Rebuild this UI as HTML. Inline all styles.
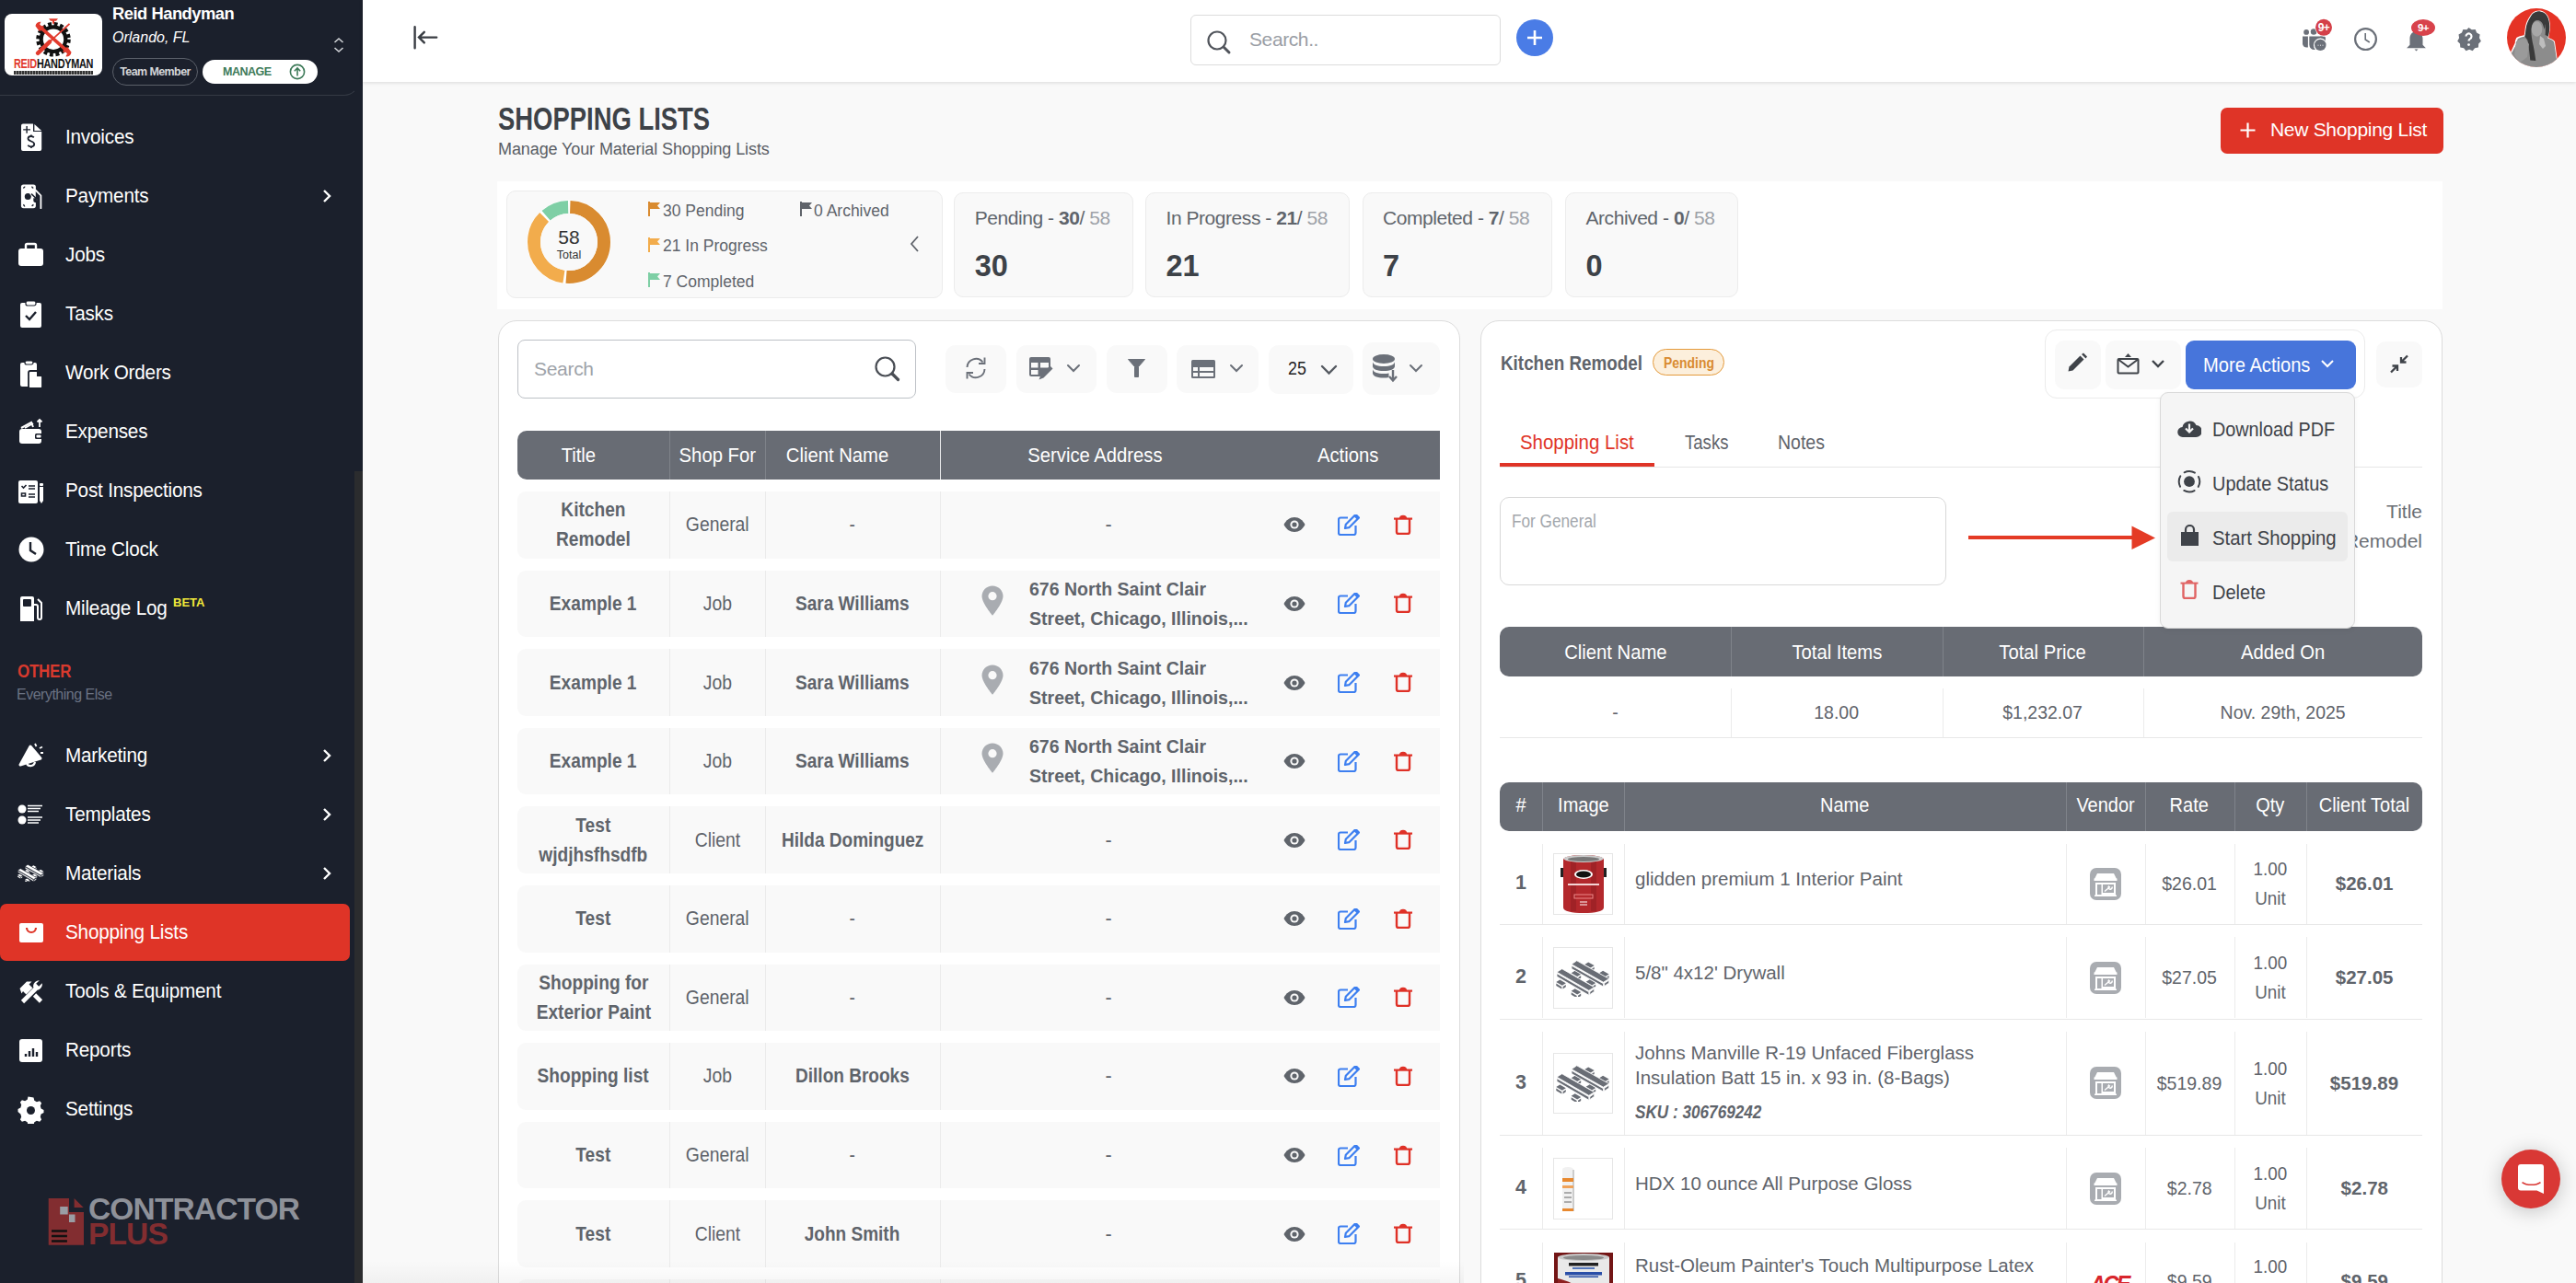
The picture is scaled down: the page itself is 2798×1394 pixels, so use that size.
<!DOCTYPE html>
<html><head><meta charset="utf-8">
<style>
*{box-sizing:border-box;margin:0;padding:0}
html,body{width:2798px;height:1394px;overflow:hidden;background:#f9f9f9;font-family:"Liberation Sans",sans-serif;color:#5f646b}
.a{position:absolute}
svg{display:block}
#sb{position:absolute;left:0;top:0;width:394px;height:1394px;background:#1b202c;color:#fff;overflow:hidden}
.mi{position:absolute;left:0;width:380px;height:62px}
.mi .ic{position:absolute;left:17px;top:15px;width:32px;height:32px}
.mi .tx{position:absolute;left:71px;top:18px;font-size:22px;line-height:26px;letter-spacing:-0.2px;color:#fff;white-space:nowrap;transform:scaleX(0.94);transform-origin:0 0}
.mi .chev{position:absolute;left:347px;top:23px;width:16px;height:16px}
#top{position:absolute;left:394px;top:0;width:2404px;height:89px;background:#fff;box-shadow:0 1px 4px rgba(0,0,0,0.13)}
</style></head>
<body>
<div id="sb">
<div class="a" style="left:-20px;top:-20px;width:410px;height:124px;border:1.5px solid transparent;border-bottom-color:#353a45;border-radius:0 0 16px 0"></div>
<div class="mi" style="top:117.6px"><svg class="ic" viewBox="0 0 32 32"><path d="M8 1.4H19V10.1H28.2V29a2 2 0 0 1-2 2H8a2 2 0 0 1-2-2V3.4a2 2 0 0 1 2-2z" fill="#fff"/><path d="M20.4 1.9L28.2 8.9H20.4Z" fill="#fff"/><path d="M8.2 7.9H16M12.1 4V11.8" stroke="#1b202c" stroke-width="1.4"/><path d="M19.8 16.4c-.8-.9-1.9-1.4-3-1.4-1.8 0-3.3 1-3.3 2.6 0 3.6 6.7 2.2 6.7 5.9 0 1.7-1.5 2.9-3.5 2.9-1.3 0-2.6-.6-3.4-1.6M16.9 13.6v1.5M16.9 26.4V28" stroke="#1b202c" stroke-width="1.8" fill="none"/></svg><div class="tx">Invoices</div></div>
<div class="mi" style="top:181.6px"><svg class="ic" viewBox="0 0 32 32"><rect x="5.9" y="3.4" width="16" height="25.8" rx="2.6" fill="#fff"/><path d="M8 7.2a2 2 0 0 0 2-1.6M17.6 5.6a2.5 2.5 0 0 0 1.7 1.8M8.2 25.5a2 2 0 0 1 1.5 1.9M17.8 27.2a2.2 2.2 0 0 1 1.7-1.7" stroke="#1b202c" stroke-width="1.3" fill="none"/><circle cx="13.3" cy="16.5" r="3.5" fill="#1b202c"/><path d="M15.7 13.6L23 20.4" stroke="#fff" stroke-width="1.2"/><path d="M17 13.6L23 19.2" stroke="#1b202c" stroke-width="1.5"/><path d="M19.3 18.3H22V23h-.7a2 2 0 0 1-2-2z" fill="#1b202c"/><path d="M22 11.5L22 23" stroke="#1b202c" stroke-width="0.1"/><rect x="21.9" y="11" width="1" height="13" fill="#1b202c"/><path d="M21.9 9.8L27.4 15.5V29.2" stroke="#fff" stroke-width="1.8" fill="none" stroke-linecap="round"/></svg><div class="tx">Payments</div><svg class="chev" viewBox="0 0 16 16"><path d="M5 2l6 6-6 6" stroke="#fff" stroke-width="2.4" fill="none"/></svg></div>
<div class="mi" style="top:245.6px"><svg class="ic" viewBox="0 0 32 32"><rect x="3" y="9" width="27" height="19" rx="3" fill="#fff"/><path d="M11 9V5.5A1.5 1.5 0 0 1 12.5 4h8A1.5 1.5 0 0 1 22 5.5V9" stroke="#fff" stroke-width="2.4" fill="none"/></svg><div class="tx">Jobs</div></div>
<div class="mi" style="top:309.6px"><svg class="ic" viewBox="0 0 32 32"><rect x="5" y="4" width="23" height="27" rx="2" fill="#fff"/><rect x="11" y="2" width="11" height="5" rx="2" fill="#fff" stroke="#1b202c" stroke-width="1.2"/><path d="M11 18l4 4 7-8" stroke="#1b202c" stroke-width="2.4" fill="none"/></svg><div class="tx">Tasks</div></div>
<div class="mi" style="top:373.6px"><svg class="ic" viewBox="0 0 32 32"><path d="M5 7a2 2 0 0 1 2-2h14a2 2 0 0 1 2 2v22a2 2 0 0 1-2 2H7a2 2 0 0 1-2-2z" fill="#fff"/><rect x="10" y="3" width="9" height="4" rx="2" fill="#fff" stroke="#1b202c" stroke-width="1.2"/><path d="M14 16a2 2 0 0 1 2-2h7l6 6v11a2 2 0 0 1-2 2H16a2 2 0 0 1-2-2z" fill="#fff" stroke="#1b202c" stroke-width="1.8"/><path d="M23 14v6h6" fill="#1b202c"/></svg><div class="tx">Work Orders</div></div>
<div class="mi" style="top:437.6px"><svg class="ic" viewBox="0 0 32 32"><rect x="4" y="13" width="24" height="16" rx="3" fill="#fff"/><path d="M6 12l11-6 2 5" stroke="#fff" stroke-width="2" fill="none"/><path d="M10 12l9-5" stroke="#fff" stroke-width="2"/><rect x="21" y="18" width="8" height="6" rx="1.5" fill="#1b202c"/><rect x="22.5" y="19.5" width="5" height="3" rx="1" fill="#fff"/><path d="M26 11V3M23.5 5.5L26 3l2.5 2.5" stroke="#fff" stroke-width="1.8" fill="none"/></svg><div class="tx">Expenses</div></div>
<div class="mi" style="top:501.6px"><svg class="ic" viewBox="0 0 32 32"><rect x="3" y="5" width="21" height="25" rx="2" fill="#fff"/><path d="M6.5 11l2 2 3-3M14 11h7M14 14h7M6.5 19h4v3h-4zM14 20h7M14 23h7" stroke="#1b202c" stroke-width="1.6" fill="none"/><path d="M26 12h4v15l-2 3-2-3z" fill="#fff"/><rect x="26" y="8" width="4" height="3" rx="1" fill="#fff"/></svg><div class="tx">Post Inspections</div></div>
<div class="mi" style="top:565.6px"><svg class="ic" viewBox="0 0 32 32"><circle cx="17" cy="16" r="13.5" fill="#fff"/><path d="M16 8v9l6 4" stroke="#1b202c" stroke-width="2.4" fill="none"/></svg><div class="tx">Time Clock</div></div>
<div class="mi" style="top:629.6px"><svg class="ic" viewBox="0 0 32 32"><path d="M5 5a2 2 0 0 1 2-2h11a2 2 0 0 1 2 2v25H5z" fill="#fff"/><rect x="8" y="6" width="9" height="8" rx="1" fill="#1b202c"/><path d="M20 12h2a2 2 0 0 1 2 2v12a2 2 0 0 0 4 0V10l-4-4" stroke="#fff" stroke-width="2" fill="none"/></svg><div class="tx">Mileage Log</div><span class="a" style="left:188px;top:17px;font-size:13px;font-weight:700;color:#f2e93a;letter-spacing:0">BETA</span></div>
<div class="a" style="left:18.5px;top:717.5px;font-size:20px;font-weight:700;color:#d93a2e;letter-spacing:-0.3px;transform:scaleX(0.85);transform-origin:0 0">OTHER</div>
<div class="a" style="left:18px;top:746px;font-size:16px;color:#6a7283;letter-spacing:-0.5px">Everything Else</div>
<div class="mi" style="top:789.5px"><svg class="ic" viewBox="0 0 32 32"><path d="M5 26L16 6l11 13z" fill="#fff" stroke="#fff" stroke-width="3" stroke-linejoin="round"/><path d="M12 25a5 5 0 0 0 9-2" stroke="#fff" stroke-width="2.2" fill="none"/><path d="M21 3l1.5 3M26 8l3-1.5M27 13h3" stroke="#fff" stroke-width="1.8"/></svg><div class="tx">Marketing</div><svg class="chev" viewBox="0 0 16 16"><path d="M5 2l6 6-6 6" stroke="#fff" stroke-width="2.4" fill="none"/></svg></div>
<div class="mi" style="top:853.5px"><svg class="ic" viewBox="0 0 32 32"><circle cx="7" cy="10" r="4.5" fill="#fff"/><circle cx="7" cy="22" r="4.5" fill="#fff"/><path d="M13 6.5h16M13 9.5h14M13 12.5h12M13 19h16M13 22h14M13 25h12" stroke="#fff" stroke-width="1.7"/></svg><div class="tx">Templates</div><svg class="chev" viewBox="0 0 16 16"><path d="M5 2l6 6-6 6" stroke="#fff" stroke-width="2.4" fill="none"/></svg></div>
<div class="mi" style="top:917.5px"><svg class="ic" style="left:19px;top:21px;width:29.5px;height:19.7px" viewBox="0 0 60 40"><g fill="#fff"><path d="M31.200000000000003 4.9L35.2 2.4000000000000004L41.7 6.1000000000000005L37.7 8.600000000000001Z"/><path d="M31.200000000000003 6.4L37.2 10.0V12.4L31.200000000000003 8.8Z"/><path d="M38.5 9.9L41.7 7.7V10.0L38.5 12.3Z"/><path d="M47.1 14.3L51.1 11.8L57.6 15.5L53.6 18.0Z"/><path d="M47.1 15.8L53.1 19.4V21.8L47.1 18.2Z"/><path d="M54.4 19.3L57.6 17.1V19.4L54.4 21.700000000000003Z"/><path d="M16.7 14.3L20.7 11.8L27.2 15.5L23.2 18.0Z"/><path d="M16.7 15.8L22.7 19.4V21.8L16.7 18.2Z"/><path d="M24.0 19.3L27.2 17.1V19.4L24.0 21.700000000000003Z"/><path d="M32.7 23.7L36.7 21.2L43.2 24.9L39.2 27.4Z"/><path d="M32.7 25.2L38.7 28.799999999999997V31.2L32.7 27.599999999999998Z"/><path d="M40.0 28.7L43.2 26.5V28.799999999999997L40.0 31.1Z"/><path d="M0.2999999999999998 24.1L4.3 21.6L10.8 25.3L6.8 27.8Z"/><path d="M0.2999999999999998 25.6L6.3 29.200000000000003V31.6L0.2999999999999998 28.0Z"/><path d="M7.6 29.1L10.8 26.900000000000002V29.200000000000003L7.6 31.5Z"/><path d="M16.7 33.8L20.7 31.299999999999997L27.2 35.0L23.2 37.5Z"/><path d="M16.7 35.3L22.7 38.9V41.3L16.7 37.699999999999996Z"/><path d="M24.0 38.8L27.2 36.599999999999994V38.9L24.0 41.199999999999996Z"/></g><g fill="#fff" stroke="#1b202c" stroke-width="0.8"><path d="M17 4.7L22.7 0.8L57.7 20.5L51.5 24.2Z"/><path d="M17 6.2L51.5 25.7V29L17 9.5Z"/><path d="M52.5 25.5L57.7 22V25L52.5 28.5Z"/><path d="M1 13.2L6.6 9.7L41.7 29.7L35.8 33.3Z"/><path d="M1 14.7L35.8 34.8V38.3L1 18Z"/><path d="M36.8 34.7L41.7 31.2V34.2L36.8 37.7Z"/></g></svg><div class="tx">Materials</div><svg class="chev" viewBox="0 0 16 16"><path d="M5 2l6 6-6 6" stroke="#fff" stroke-width="2.4" fill="none"/></svg></div>
<div class="a" style="left:0;top:982px;width:380px;height:62px;background:#df3427;border-radius:7px"></div>
<div class="mi" style="top:981.5px"><svg class="ic" viewBox="0 0 32 32"><rect x="4" y="6" width="26" height="21" rx="2" fill="#fff"/><path d="M12 11a5 5 0 0 0 10 0" stroke="#df3427" stroke-width="2.2" fill="none"/></svg><div class="tx">Shopping Lists</div></div>
<div class="mi" style="top:1045.5px"><svg class="ic" viewBox="0 0 32 32"><path d="M7.5 27.5L22 13" stroke="#fff" stroke-width="4.6"/><path d="M19 10.5a6.5 6.5 0 0 1 6.8-6.3l-3.6 3.6 3 3 3.6-3.6a6.5 6.5 0 0 1-8.3 7.3z" fill="#fff"/><path d="M20.5 20L27.5 27" stroke="#fff" stroke-width="4.6"/><path d="M4.5 13L12 5.5L17.5 5.5L14.5 8.5L18.5 12.5L11.5 19.5L8 16L6.5 18.5Z" fill="#fff"/></svg><div class="tx">Tools &amp; Equipment</div></div>
<div class="mi" style="top:1109.5px"><svg class="ic" viewBox="0 0 32 32"><rect x="4" y="4" width="25" height="25" rx="3" fill="#fff"/><path d="M11 23v-3M15 23v-6M19 23v-9M23 23v-5" stroke="#1b202c" stroke-width="2.4"/></svg><div class="tx">Reports</div></div>
<div class="mi" style="top:1173.5px"><svg class="ic" viewBox="0 0 32 32"><path d="M16.5 3l3 .5.8 3.2 2.6 1.5 3.2-1 2 2.4-1.3 3 .8 2.9 2.9 1.5v3l-2.9 1.5-.8 2.9 1.3 3-2 2.4-3.2-1-2.6 1.5-.8 3.2-3 .5-3-.5-.8-3.2-2.6-1.5-3.2 1-2-2.4 1.3-3-.8-2.9L2.5 19v-3l2.9-1.5.8-2.9-1.3-3 2-2.4 3.2 1 2.6-1.5.8-3.2z" fill="#fff"/><circle cx="16.5" cy="17.5" r="4.5" fill="#1b202c"/></svg><div class="tx">Settings</div></div>
<svg class="a" style="left:52px;top:1300px" width="42" height="56" viewBox="52 1300 42 56">
<path d="M52.7 1302H75V1317H91V1352.7H52.7z" fill="#822d30"/>
<path d="M80.6 1302L90.7 1312H80.6z" fill="#822d30"/>
<rect x="65.2" y="1311" width="8.5" height="8.5" fill="#9a9da4"/><rect x="75" y="1319.5" width="6.5" height="8.5" fill="#9a9da4"/>
<path d="M56 1337.5H72.9M56 1343H72.9M56 1348.5H72.9" stroke="#111" stroke-width="2.6"/>
</svg>
<div class="a" style="left:96px;top:1296px;font-size:33.5px;font-weight:700;color:#8e9199;letter-spacing:-0.85px;line-height:36px;white-space:nowrap">CONTRACTOR</div>
<div class="a" style="left:96px;top:1323px;font-size:33.5px;font-weight:700;color:#822d30;letter-spacing:-0.85px;line-height:36px;white-space:nowrap">PLUS</div>
<div class="a" style="left:5px;top:14.7px;width:106.3px;height:67.3px;background:#fff;border-radius:8px;overflow:hidden">
<svg class="a" style="left:0;top:0" width="106" height="67" viewBox="5 14.7 106 67">
<g transform="translate(58,42.4)">
<circle r="15.5" fill="none" stroke="#111" stroke-width="6.5" stroke-dasharray="3.6 2.5"/>
<circle r="13.3" fill="none" stroke="#111" stroke-width="4.2"/>
</g>
<path d="M42 27.5L74.5 56.5" stroke="#e23b2e" stroke-width="3.6"/>
<path d="M38.5 28a5 5 0 0 1 6-4.5l-1.5 3 1.5 2 3-1a5 5 0 0 1-5 6z" fill="#e23b2e"/>
<path d="M77.5 56.5a5 5 0 0 1-6 4.5l1.5-3-1.5-2-3 1a5 5 0 0 1 5-6z" fill="#e23b2e"/>
<path d="M75.5 25.5L54 45" stroke="#e23b2e" stroke-width="1.8"/>
<path d="M54 45L41 57.5" stroke="#e23b2e" stroke-width="4.5" stroke-linecap="round"/>
<path d="M53 20h10l-2 2.5h-2v3h-2v-3h-2z" fill="#e23b2e"/>
</svg>
<div class="a" style="left:9.7px;top:47.5px;font-size:16px;font-weight:700;letter-spacing:-0.4px;line-height:16px;transform:scale(0.68,0.95);transform-origin:0 0;white-space:nowrap;font-family:'Liberation Sans'"><span style="color:#e23b2e">REID</span><span style="color:#111">HANDYMAN</span></div>
<div class="a" style="left:9.7px;top:62.3px;width:86.3px;height:3.8px;background:repeating-linear-gradient(90deg,#333 0 2px,#888 2px 3px)"></div>
</div>
<div class="a" style="left:122px;top:3.5px;font-size:19px;font-weight:700;color:#fff;letter-spacing:-0.5px;transform:scaleX(0.965);transform-origin:0 0">Reid Handyman</div>
<div class="a" style="left:122px;top:32px;font-size:16px;font-style:italic;color:#fff;letter-spacing:0px">Orlando, FL</div>
<div class="a" style="left:122px;top:63px;width:93px;height:30px;border:1.2px solid #5b606a;border-radius:15px;font-size:12.5px;font-weight:700;color:#d5d6d9;text-align:center;line-height:28px;letter-spacing:-0.6px">Team Member</div>
<div class="a" style="left:220px;top:65px;width:125px;height:26px;background:#fff;border-radius:13px;font-size:12.5px;font-weight:700;color:#3d7a58;line-height:26px;letter-spacing:-0.5px"><span class="a" style="left:22px;top:0">MANAGE</span>
<svg class="a" style="left:94px;top:4px" width="18" height="18" viewBox="0 0 18 18"><circle cx="9" cy="9" r="7.6" stroke="#3d7a58" stroke-width="1.6" fill="none"/><path d="M9 13.5V5M5.8 8.2L9 5l3.2 3.2" stroke="#3d7a58" stroke-width="1.6" fill="none"/></svg></div>
<svg class="a" style="left:361px;top:40px" width="14" height="18" viewBox="0 0 14 18"><path d="M2.5 6L7 2l4.5 4M2.5 12L7 16l4.5-4" stroke="#d0d2d6" stroke-width="1.6" fill="none"/></svg>
<div class="a" style="left:385px;top:512px;width:9px;height:882px;background:#2b2c2e;border-radius:0"></div>
</div>
<div id="top"></div>
<svg class="a" style="left:440px;top:20px" width="44" height="44" viewBox="440 20 44 44"><path d="M450.6 29.2v23M455.5 40.6h18.7M460.8 34.8l-5.8 5.8 5.8 5.8" stroke="#393d43" stroke-width="2.4" stroke-linecap="round" fill="none"/></svg>
<div class="a" style="left:1293px;top:16px;width:337px;height:55px;border:1px solid #dcdcdc;border-radius:6px;background:#fff"></div>
<svg class="a" style="left:1308px;top:30px" width="32" height="32" viewBox="0 0 32 32"><circle cx="14" cy="14" r="9.5" stroke="#50545b" stroke-width="2.2" fill="none"/><path d="M21 21l6 6" stroke="#50545b" stroke-width="3" stroke-linecap="round"/></svg>
<div class="a" style="left:1357px;top:31px;font-size:21px;color:#9a9ea5;letter-spacing:-0.4px">Search..</div>
<svg class="a" style="left:1647px;top:21px" width="40" height="40" viewBox="0 0 40 40"><circle cx="20" cy="20" r="20" fill="#4a7ce6"/><path d="M20 12v16M12 20h16" stroke="#fff" stroke-width="2.6"/></svg>
<!-- team -->
<svg class="a" style="left:2495px;top:15px" width="50" height="50" viewBox="2495 15 50 50">
<circle cx="2505.1" cy="34.9" r="2.9" fill="#6b7079"/><circle cx="2513.1" cy="34.5" r="3.3" fill="#6b7079"/>
<path d="M2501 39.4h5.9v12.2h-1.5a4.4 4.4 0 0 1-4.4-4.4z" fill="#6b7079"/>
<path d="M2508.3 39.4h14.7v2h-3v12.6h-6.3a5.4 5.4 0 0 1-5.4-5.4z" fill="#6b7079"/>
<path d="M2520.3 39.4h4a1.6 1.6 0 0 1 1.6 1.6v3h-5.6z" fill="#6b7079"/>
<circle cx="2520.3" cy="48.9" r="7.4" fill="#fff"/>
<circle cx="2520.3" cy="48.9" r="6.2" fill="#6b7079"/>
<path d="M2517.5 49.2h1M2520 49.2h1M2522.5 49.2h1" stroke="#fff" stroke-width="0.9"/>
<circle cx="2524" cy="29.8" r="9.6" fill="#fff"/>
<circle cx="2524" cy="29.8" r="9" fill="#d43f48"/>
<text x="2524" y="34" font-family="Liberation Sans" font-size="12" font-weight="700" fill="#fff" text-anchor="middle" letter-spacing="-0.6">9+</text>
</svg>
<svg class="a" style="left:2555px;top:28px" width="30" height="30" viewBox="0 0 30 30"><circle cx="14.5" cy="14.6" r="11.4" stroke="#6b7079" stroke-width="2.2" fill="none"/><path d="M14.2 8v7l4.6 3" stroke="#6b7079" stroke-width="1.6" fill="none"/></svg>
<svg class="a" style="left:2610px;top:18px" width="40" height="40" viewBox="0 0 40 40">
<path d="M14.5 16.3c-4.6 0-7 3.6-7 7.8v6.6l-3.4 3.6h20.8l-3.4-3.6v-6.6c0-4.2-2.4-7.8-7-7.8z" fill="#6b7079"/><path d="M12.5 35.5h4l-2 2z" fill="#6b7079"/>
<ellipse cx="22" cy="12" rx="13" ry="9" fill="#d8424b"/>
<text x="22" y="16.3" font-family="Liberation Sans" font-size="11.5" font-weight="700" fill="#fff" text-anchor="middle" letter-spacing="-0.5">9+</text>
</svg>
<svg class="a" style="left:2667px;top:28px" width="30" height="30" viewBox="0 0 30 30">
<path d="M14.5 2l3.3 2.2 3.9-.3 1.4 3.7 3.5 1.8-.6 3.9 1.9 3.4-2.7 2.8-.3 3.9-3.8.8-2.4 3.1-3.6-1.5-3.6 1.5-2.4-3.1-3.8-.8-.3-3.9L2.2 16.7l1.9-3.4-.6-3.9L7 7.6l1.4-3.7 3.9.3z" fill="#6b7079"/>
<path d="M11.5 11.5a3 3 0 1 1 4.5 2.6c-1 .6-1.5 1.2-1.5 2.4" stroke="#fff" stroke-width="2.2" fill="none"/><circle cx="14.5" cy="20.6" r="1.4" fill="#fff"/>
</svg>
<svg class="a" style="left:2723px;top:9px" width="64" height="64" viewBox="0 0 64 64">
<defs><clipPath id="av"><circle cx="32" cy="32" r="32"/></clipPath></defs>
<g clip-path="url(#av)">
<rect width="64" height="64" fill="#e53325"/>
<path d="M35.4 2.4c-4.5 0-8 2-9.6 4.8-2.5 4-4.5 7-5.5 11.3-1 4.5-.8 8-1.7 10.7-3 .6-6 1.3-8.3 2.8-1 2-1.6 4-1.5 5.5L3.5 49 2 66h56l-3.5-12-2.6-18c-2-2.5-4.5-3-6.8-4 .6-3 1.7-7 1.7-12.5 0-5-1-8.5-2.6-11.5-1.8-3-5-5.6-8.8-5.6z" fill="#fff"/>
<path d="M35.4 3.6c-4 0-7 1.8-8.6 4.4-2.4 3.8-4.2 7-5.2 11-1 4.3-.8 8-1.9 11.5-3 .5-5.6 1.2-7.8 2.6-.8 1.8-1.3 3.6-1.3 5.2L4.8 49 3.5 66h53.5l-3.3-12-2.6-17.6c-1.8-2.3-4.3-2.8-6.8-3.8.6-3 1.9-7 1.9-12.6 0-4.8-1-8.3-2.5-11.2-1.7-3-4.7-5.2-8.3-5.2z" fill="#8c8c8c"/>
<path d="M35 3.6c-4 0-7 1.8-8.6 4.4-2.4 3.8-4.2 7-5.2 11-1 4.3-.8 8-1.9 11.5l3 4c1 5 2 12 3 22l6 .5c-1-8-2-14-3.5-20-1-6-2-11-1-17 1-4 3-7 6-7s5 2 6 4l2 6c1-4 .5-8-1-11.5-1.2-2.8-2.8-7.9-4.8-7.9z" fill="#3a3a3a"/>
<path d="M26.5 8.5c2-3.2 5.4-4.9 8.9-4.9 3.6 0 6.6 2.2 8.3 5.2 1.5 2.9 2.5 6.4 2.5 11.2 0 4-.6 7.5-1.4 10.5l-3.2-1.5c.4-5 .5-10-1-13.5-1.5-3-4-4.5-7-4.5s-5.5 1.5-7 4z" fill="#3a3a3a"/><ellipse cx="32.5" cy="22.5" rx="5.8" ry="8.2" fill="#a8a8a8"/>
<path d="M36 30l4 3 2 8-3 3-4-5z" fill="#bdbdbd"/>
<path d="M10 36c3-2 7-3 10-3l4 6-2 14-8 6-6-8z" fill="#9a9a9a"/>
</g></svg>
<div class="a" style="left:541px;top:110px;font-size:34.5px;font-weight:700;color:#3d4248;transform:scaleX(0.795);transform-origin:0 0;white-space:nowrap;line-height:38px">SHOPPING LISTS</div>
<div class="a" style="left:541px;top:151px;font-size:18px;color:#5a5e65;letter-spacing:-0.1px;white-space:nowrap;line-height:22px">Manage Your Material Shopping Lists</div>
<div class="a" style="left:2412px;top:117px;width:242px;height:50px;background:#df3427;border-radius:7px"></div>
<svg class="a" style="left:2432px;top:132px" width="19" height="19" viewBox="0 0 19 19"><path d="M9.5 1.5v16M1.5 9.5h16" stroke="#fff" stroke-width="2.2"/></svg>
<div class="a" style="left:2466px;top:129px;font-size:21px;color:#fff;letter-spacing:-0.3px;white-space:nowrap;line-height:24px">New Shopping List</div>

<div class="a" style="left:540px;top:197px;width:2113px;height:139px;background:#fff"></div>
<div class="a" style="left:550px;top:207px;width:474px;height:117px;background:#f9f9f9;border:1px solid #ececec;border-radius:10px"></div>
<svg class="a" style="left:568px;top:213px" width="100" height="100" viewBox="0 0 100 100">
<circle cx="50" cy="50" r="45.5" fill="#fff"/>
<g transform="rotate(-90 50 50)" fill="none" stroke-width="14">
<circle cx="50" cy="50" r="38" stroke="#d98b30" stroke-dasharray="120.90 500" stroke-dashoffset="-1.30"/>
<circle cx="50" cy="50" r="38" stroke="#f2ac4c" stroke-dasharray="83.85 500" stroke-dashoffset="-124.80"/>
<circle cx="50" cy="50" r="38" stroke="#7ecfa5" stroke-dasharray="26.22 500" stroke-dashoffset="-211.25"/>
</g>
<circle cx="50" cy="50" r="31" fill="#f9f9f9"/>
<text x="50" y="52" font-family="Liberation Sans" font-size="21" fill="#333" text-anchor="middle">58</text>
<text x="50" y="68" font-family="Liberation Sans" font-size="12.5" fill="#333" text-anchor="middle">Total</text>
</svg>
<svg class="a" style="left:704px;top:219px" width="13" height="16" viewBox="0 0 13 16"><path d="M1 0v16" stroke="#d98b30" stroke-width="2"/><path d="M2 1h11l-3 3.5 3 3.5H2z" fill="#d98b30"/></svg>
<svg class="a" style="left:704px;top:258px" width="13" height="16" viewBox="0 0 13 16"><path d="M1 0v16" stroke="#f2ac4c" stroke-width="2"/><path d="M2 1h11l-3 3.5 3 3.5H2z" fill="#f2ac4c"/></svg>
<svg class="a" style="left:704px;top:296px" width="13" height="16" viewBox="0 0 13 16"><path d="M1 0v16" stroke="#7ecfa5" stroke-width="2"/><path d="M2 1h11l-3 3.5 3 3.5H2z" fill="#7ecfa5"/></svg>
<svg class="a" style="left:869px;top:219px" width="13" height="16" viewBox="0 0 13 16"><path d="M1 0v16" stroke="#5f636a" stroke-width="2"/><path d="M2 1h11l-3 3.5 3 3.5H2z" fill="#5f636a"/></svg>
<div class="a" style="left:720px;top:218.5px;font-size:17.5px;color:#5f646b;white-space:nowrap;line-height:20px">30 Pending</div>
<div class="a" style="left:720px;top:257px;font-size:17.5px;color:#5f646b;white-space:nowrap;line-height:20px">21 In Progress</div>
<div class="a" style="left:720px;top:295.5px;font-size:17.5px;color:#5f646b;white-space:nowrap;line-height:20px">7 Completed</div>
<div class="a" style="left:884px;top:218.5px;font-size:17.5px;color:#5f646b;white-space:nowrap;line-height:20px">0 Archived</div>
<svg class="a" style="left:985px;top:254px" width="16" height="22" viewBox="0 0 16 22"><path d="M12 3L5 11l7 8" stroke="#5f636a" stroke-width="1.8" fill="none"/></svg>
<div class="a" style="left:1036.3px;top:209px;width:194.3px;height:113.5px;background:#f9f9f9;border:1px solid #ececec;border-radius:10px"></div>
<div class="a" style="left:1058.8px;top:225px;font-size:21px;color:#60656c;letter-spacing:-0.45px;white-space:nowrap;line-height:24px">Pending - <b>30</b>/ <span style="color:#9ea2a8">58</span></div>
<div class="a" style="left:1058.8px;top:272px;font-size:32.5px;font-weight:700;color:#3d4248;white-space:nowrap;line-height:34px">30</div>
<div class="a" style="left:1244.0px;top:209px;width:221.5px;height:113.5px;background:#f9f9f9;border:1px solid #ececec;border-radius:10px"></div>
<div class="a" style="left:1266.5px;top:225px;font-size:21px;color:#60656c;letter-spacing:-0.45px;white-space:nowrap;line-height:24px">In Progress - <b>21</b>/ <span style="color:#9ea2a8">58</span></div>
<div class="a" style="left:1266.5px;top:272px;font-size:32.5px;font-weight:700;color:#3d4248;white-space:nowrap;line-height:34px">21</div>
<div class="a" style="left:1479.5px;top:209px;width:206.1px;height:113.5px;background:#f9f9f9;border:1px solid #ececec;border-radius:10px"></div>
<div class="a" style="left:1502.0px;top:225px;font-size:21px;color:#60656c;letter-spacing:-0.45px;white-space:nowrap;line-height:24px">Completed - <b>7</b>/ <span style="color:#9ea2a8">58</span></div>
<div class="a" style="left:1502.0px;top:272px;font-size:32.5px;font-weight:700;color:#3d4248;white-space:nowrap;line-height:34px">7</div>
<div class="a" style="left:1700.0px;top:209px;width:187.5px;height:113.5px;background:#f9f9f9;border:1px solid #ececec;border-radius:10px"></div>
<div class="a" style="left:1722.5px;top:225px;font-size:21px;color:#60656c;letter-spacing:-0.45px;white-space:nowrap;line-height:24px">Archived - <b>0</b>/ <span style="color:#9ea2a8">58</span></div>
<div class="a" style="left:1722.5px;top:272px;font-size:32.5px;font-weight:700;color:#3d4248;white-space:nowrap;line-height:34px">0</div>
<div class="a" style="left:540.5px;top:347.5px;width:1045px;height:1100px;background:#fff;border:1.2px solid #dcdcdc;border-radius:20px"></div>
<div class="a" style="left:562px;top:369px;width:433px;height:64px;border:1.2px solid #bdc1c6;border-radius:8px;background:#fff"></div>
<div class="a" style="left:580px;top:389px;font-size:21px;color:#9ea3a9;letter-spacing:-0.3px;line-height:24px">Search</div>
<svg class="a" style="left:948px;top:385px" width="32" height="32" viewBox="0 0 32 32"><circle cx="13.5" cy="13.5" r="10" stroke="#4a4e55" stroke-width="2.2" fill="none"/><path d="M21 21l6.5 6.5" stroke="#4a4e55" stroke-width="3.2" stroke-linecap="round"/></svg>
<div class="a" style="left:1027px;top:375px;width:66.0px;height:52.0px;background:#f9f9f9;border-radius:11px"></div>
<div class="a" style="left:1104px;top:375px;width:86.6px;height:52.0px;background:#f9f9f9;border-radius:11px"></div>
<div class="a" style="left:1202px;top:375px;width:66.0px;height:52.0px;background:#f9f9f9;border-radius:11px"></div>
<div class="a" style="left:1278px;top:375px;width:88.7px;height:52.0px;background:#f9f9f9;border-radius:11px"></div>
<div class="a" style="left:1378.3px;top:375px;width:91.4px;height:52.6px;background:#f9f9f9;border-radius:11px"></div>
<div class="a" style="left:1480px;top:372px;width:84.0px;height:57.4px;background:#f9f9f9;border-radius:11px"></div>
<svg class="a" style="left:1046px;top:386px" width="28" height="28" viewBox="0 0 28 28"><path d="M4.5 13A9.5 9.5 0 0 1 21.5 7.5M23.5 15A9.5 9.5 0 0 1 6.5 20.5" stroke="#6b7079" stroke-width="1.9" fill="none"/><path d="M23.5 2.5v6.5H17M4.5 25.5V19H11" stroke="#6b7079" stroke-width="1.9" fill="none"/></svg>
<svg class="a" style="left:1117px;top:387px" width="28" height="27" viewBox="0 0 28 27"><path d="M3 1h19a2 2 0 0 1 2 2v8l-11 11H3a2 2 0 0 1-2-2V3a2 2 0 0 1 2-2z" fill="#6b7079"/><rect x="3" y="7" width="7.5" height="5.5" fill="#f9f9f9"/><rect x="13" y="7" width="9" height="5.5" fill="#f9f9f9"/><rect x="3" y="15" width="7.5" height="5" fill="#f9f9f9"/><path d="M11.5 25.5l2-5 10-10 3 3-10 10z" fill="#6b7079"/></svg>
<svg class="a" style="left:1158px;top:395px" width="16" height="12" viewBox="-2 -2 16 12"><path d="M0 0l6.0 6.0l6.0 -6.0" stroke="#6b7079" stroke-width="2" fill="none" stroke-linecap="round"/></svg>
<svg class="a" style="left:1225px;top:390px" width="19" height="20" viewBox="0 0 19 20"><path d="M0.5 0.5h18l-7 8v11h-4v-11z" fill="#6b7079" stroke="#6b7079" stroke-linejoin="round"/></svg>
<svg class="a" style="left:1294px;top:391px" width="26" height="20" viewBox="0 0 26 20"><rect x="0" y="0" width="26" height="20" rx="1.5" fill="#6b7079"/><rect x="2" y="8" width="5" height="4" fill="#f9f9f9"/><rect x="9" y="8" width="15" height="4" fill="#f9f9f9"/><rect x="2" y="14" width="5" height="4" fill="#f9f9f9"/><rect x="9" y="14" width="15" height="4" fill="#f9f9f9"/></svg>
<svg class="a" style="left:1334.5px;top:395px" width="16" height="12" viewBox="-2 -2 16 12"><path d="M0 0l6.0 6.0l6.0 -6.0" stroke="#6b7079" stroke-width="2" fill="none" stroke-linecap="round"/></svg>
<div class="a" style="left:1399px;top:388px;font-size:21px;color:#222;line-height:24px;transform:scaleX(0.85);transform-origin:0 0">25</div>
<svg class="a" style="left:1434px;top:396px" width="19" height="12" viewBox="-2 -2 19 12"><path d="M0 0l7.5 7.5l7.5 -7.5" stroke="#555a61" stroke-width="2.4" fill="none" stroke-linecap="round"/></svg>
<svg class="a" style="left:1491px;top:385px" width="29" height="31" viewBox="0 0 29 31"><ellipse cx="12" cy="5" rx="12" ry="5" fill="#6b7079"/><path d="M0 8c0 3 5 5 12 5s12-2 12-5v5c0 3-5 5-12 5S0 16 0 13z" fill="#6b7079"/><path d="M0 16c0 3 5 5 12 5 2 0 4-.2 5.5-.6V25c-1.5.4-3.5.6-5.5.6-7 0-12-2-12-5z" fill="#6b7079"/><path d="M22 17v11M18 24l4 4.5 4-4.5" stroke="#6b7079" stroke-width="2.4" fill="none"/></svg>
<svg class="a" style="left:1530px;top:395px" width="16" height="12" viewBox="-2 -2 16 12"><path d="M0 0l6.0 6.0l6.0 -6.0" stroke="#6b7079" stroke-width="2" fill="none" stroke-linecap="round"/></svg>
<div class="a" style="left:562px;top:468px;width:1002px;height:52.5px;background:#686c74;border-radius:10px 0 0 10px"></div>
<div class="a" style="left:727px;top:468px;width:1px;height:52.5px;background:#7f838a"></div>
<div class="a" style="left:831px;top:468px;width:1px;height:52.5px;background:#7f838a"></div>
<div class="a" style="left:1020.5px;top:468px;width:1.5px;height:52.5px;background:#e8e9ea"></div>
<div class="a" style="left:478.5px;top:482px;width:300px;text-align:center;font-size:22px;color:#fff;line-height:26px;white-space:nowrap"><span style="display:inline-block;transform:scaleX(0.92)">Title</span></div>
<div class="a" style="left:629px;top:482px;width:300px;text-align:center;font-size:22px;color:#fff;line-height:26px;white-space:nowrap"><span style="display:inline-block;transform:scaleX(0.92)">Shop For</span></div>
<div class="a" style="left:759.5px;top:482px;width:300px;text-align:center;font-size:22px;color:#fff;line-height:26px;white-space:nowrap"><span style="display:inline-block;transform:scaleX(0.92)">Client Name</span></div>
<div class="a" style="left:1039px;top:482px;width:300px;text-align:center;font-size:22px;color:#fff;line-height:26px;white-space:nowrap"><span style="display:inline-block;transform:scaleX(0.92)">Service Address</span></div>
<div class="a" style="left:1314.5px;top:482px;width:300px;text-align:center;font-size:22px;color:#fff;line-height:26px;white-space:nowrap"><span style="display:inline-block;transform:scaleX(0.92)">Actions</span></div>
<div class="a" style="left:562px;top:534.0px;width:1002px;height:72.5px;background:#f9f9f9;border-radius:9px 0 0 9px"></div>
<div class="a" style="left:727px;top:534.0px;width:1px;height:72.5px;background:#ebebeb"></div>
<div class="a" style="left:831px;top:534.0px;width:1px;height:72.5px;background:#ebebeb"></div>
<div class="a" style="left:1021px;top:534.0px;width:1px;height:72.5px;background:#ebebeb"></div>
<div class="a" style="left:524.5px;top:538.2px;width:240px;text-align:center;font-size:21.5px;font-weight:700;color:#5f646b;line-height:32px;white-space:nowrap"><span style="display:inline-block;transform:scaleX(0.89)">Kitchen</span><br><span style="display:inline-block;transform:scaleX(0.89)">Remodel</span></div>
<div class="a" style="left:659px;top:554.2px;width:240px;text-align:center;font-size:21.5px;font-weight:400;color:#5f646b;line-height:32px;white-space:nowrap"><span style="display:inline-block;transform:scaleX(0.9)">General</span></div>
<div class="a" style="left:806px;top:554.2px;width:240px;text-align:center;font-size:21.5px;font-weight:400;color:#5f646b;line-height:32px;white-space:nowrap"><span style="display:inline-block;transform:scaleX(0.885)">-</span></div>
<div class="a" style="left:1084px;top:554.2px;width:240px;text-align:center;font-size:21.5px;font-weight:400;color:#5f646b;line-height:32px;white-space:nowrap"><span style="display:inline-block;transform:scaleX(1)">-</span></div>
<svg class="a" style="left:1394px;top:561.2px" width="24" height="18" viewBox="0 0 24 18"><path d="M0.5 9C3 4 7 1 12 1s9 3 11.5 8C21 14 17 17 12 17S3 14 0.5 9z" fill="#5f646b"/><circle cx="12" cy="9" r="4.6" fill="#f9f9f9"/><circle cx="12" cy="9" r="2.6" fill="#5f646b"/></svg>
<svg class="a" style="left:1453px;top:558.8px" width="24" height="23" viewBox="0 0 24 23"><path d="M11 3.5H3a2 2 0 0 0-2 2V20a2 2 0 0 0 2 2h14.5a2 2 0 0 0 2-2v-8" stroke="#3d7ff0" stroke-width="2.2" fill="none"/><path d="M8 15l.8-4.3L19.5 0l3.5 3.5L12.3 14.2z" stroke="#3d7ff0" stroke-width="2.2" fill="none" stroke-linejoin="round"/><path d="M17.5 2l3.5 3.5 2-2-3.5-3.5z" fill="#3d7ff0"/></svg>
<svg class="a" style="left:1513px;top:558.8px" width="22" height="22" viewBox="0 0 22 22"><path d="M1 4.6h20" stroke="#df3127" stroke-width="2.2" fill="none"/><path d="M6.8 4.6a4.2 3.8 0 0 1 8.4 0z" fill="#df3127"/><path d="M4 5v14a2 2 0 0 0 2 2h10a2 2 0 0 0 2-2V5" stroke="#df3127" stroke-width="2.4" fill="none"/></svg>
<div class="a" style="left:562px;top:619.6px;width:1002px;height:72.5px;background:#f9f9f9;border-radius:9px 0 0 9px"></div>
<div class="a" style="left:727px;top:619.6px;width:1px;height:72.5px;background:#ebebeb"></div>
<div class="a" style="left:831px;top:619.6px;width:1px;height:72.5px;background:#ebebeb"></div>
<div class="a" style="left:1021px;top:619.6px;width:1px;height:72.5px;background:#ebebeb"></div>
<div class="a" style="left:524.5px;top:639.9px;width:240px;text-align:center;font-size:21.5px;font-weight:700;color:#5f646b;line-height:32px;white-space:nowrap"><span style="display:inline-block;transform:scaleX(0.89)">Example 1</span></div>
<div class="a" style="left:659px;top:639.9px;width:240px;text-align:center;font-size:21.5px;font-weight:400;color:#5f646b;line-height:32px;white-space:nowrap"><span style="display:inline-block;transform:scaleX(0.9)">Job</span></div>
<div class="a" style="left:806px;top:639.9px;width:240px;text-align:center;font-size:21.5px;font-weight:700;color:#5f646b;line-height:32px;white-space:nowrap"><span style="display:inline-block;transform:scaleX(0.885)">Sara Williams</span></div>
<svg class="a" style="left:1065.5px;top:635.9px" width="24" height="33" viewBox="0 0 24 33"><path d="M12 0.5C5.6 0.5 0.5 5.5 0.5 11.8c0 7.5 11.5 21 11.5 21s11.5-13.5 11.5-21C23.5 5.5 18.4 0.5 12 0.5z" fill="#a9acb1"/><circle cx="12" cy="11.7" r="4.6" fill="#f9f9f9"/></svg><div class="a" style="left:1118px;top:623.9px;font-size:21px;font-weight:700;color:#5f646b;line-height:32px;white-space:nowrap;transform:scaleX(0.93);transform-origin:0 0">676 North Saint Clair<br>Street, Chicago, Illinois,...</div><svg class="a" style="left:1394px;top:646.9px" width="24" height="18" viewBox="0 0 24 18"><path d="M0.5 9C3 4 7 1 12 1s9 3 11.5 8C21 14 17 17 12 17S3 14 0.5 9z" fill="#5f646b"/><circle cx="12" cy="9" r="4.6" fill="#f9f9f9"/><circle cx="12" cy="9" r="2.6" fill="#5f646b"/></svg>
<svg class="a" style="left:1453px;top:644.4px" width="24" height="23" viewBox="0 0 24 23"><path d="M11 3.5H3a2 2 0 0 0-2 2V20a2 2 0 0 0 2 2h14.5a2 2 0 0 0 2-2v-8" stroke="#3d7ff0" stroke-width="2.2" fill="none"/><path d="M8 15l.8-4.3L19.5 0l3.5 3.5L12.3 14.2z" stroke="#3d7ff0" stroke-width="2.2" fill="none" stroke-linejoin="round"/><path d="M17.5 2l3.5 3.5 2-2-3.5-3.5z" fill="#3d7ff0"/></svg>
<svg class="a" style="left:1513px;top:644.4px" width="22" height="22" viewBox="0 0 22 22"><path d="M1 4.6h20" stroke="#df3127" stroke-width="2.2" fill="none"/><path d="M6.8 4.6a4.2 3.8 0 0 1 8.4 0z" fill="#df3127"/><path d="M4 5v14a2 2 0 0 0 2 2h10a2 2 0 0 0 2-2V5" stroke="#df3127" stroke-width="2.4" fill="none"/></svg>
<div class="a" style="left:562px;top:705.2px;width:1002px;height:72.5px;background:#f9f9f9;border-radius:9px 0 0 9px"></div>
<div class="a" style="left:727px;top:705.2px;width:1px;height:72.5px;background:#ebebeb"></div>
<div class="a" style="left:831px;top:705.2px;width:1px;height:72.5px;background:#ebebeb"></div>
<div class="a" style="left:1021px;top:705.2px;width:1px;height:72.5px;background:#ebebeb"></div>
<div class="a" style="left:524.5px;top:725.5px;width:240px;text-align:center;font-size:21.5px;font-weight:700;color:#5f646b;line-height:32px;white-space:nowrap"><span style="display:inline-block;transform:scaleX(0.89)">Example 1</span></div>
<div class="a" style="left:659px;top:725.5px;width:240px;text-align:center;font-size:21.5px;font-weight:400;color:#5f646b;line-height:32px;white-space:nowrap"><span style="display:inline-block;transform:scaleX(0.9)">Job</span></div>
<div class="a" style="left:806px;top:725.5px;width:240px;text-align:center;font-size:21.5px;font-weight:700;color:#5f646b;line-height:32px;white-space:nowrap"><span style="display:inline-block;transform:scaleX(0.885)">Sara Williams</span></div>
<svg class="a" style="left:1065.5px;top:721.5px" width="24" height="33" viewBox="0 0 24 33"><path d="M12 0.5C5.6 0.5 0.5 5.5 0.5 11.8c0 7.5 11.5 21 11.5 21s11.5-13.5 11.5-21C23.5 5.5 18.4 0.5 12 0.5z" fill="#a9acb1"/><circle cx="12" cy="11.7" r="4.6" fill="#f9f9f9"/></svg><div class="a" style="left:1118px;top:709.5px;font-size:21px;font-weight:700;color:#5f646b;line-height:32px;white-space:nowrap;transform:scaleX(0.93);transform-origin:0 0">676 North Saint Clair<br>Street, Chicago, Illinois,...</div><svg class="a" style="left:1394px;top:732.5px" width="24" height="18" viewBox="0 0 24 18"><path d="M0.5 9C3 4 7 1 12 1s9 3 11.5 8C21 14 17 17 12 17S3 14 0.5 9z" fill="#5f646b"/><circle cx="12" cy="9" r="4.6" fill="#f9f9f9"/><circle cx="12" cy="9" r="2.6" fill="#5f646b"/></svg>
<svg class="a" style="left:1453px;top:730.0px" width="24" height="23" viewBox="0 0 24 23"><path d="M11 3.5H3a2 2 0 0 0-2 2V20a2 2 0 0 0 2 2h14.5a2 2 0 0 0 2-2v-8" stroke="#3d7ff0" stroke-width="2.2" fill="none"/><path d="M8 15l.8-4.3L19.5 0l3.5 3.5L12.3 14.2z" stroke="#3d7ff0" stroke-width="2.2" fill="none" stroke-linejoin="round"/><path d="M17.5 2l3.5 3.5 2-2-3.5-3.5z" fill="#3d7ff0"/></svg>
<svg class="a" style="left:1513px;top:730.0px" width="22" height="22" viewBox="0 0 22 22"><path d="M1 4.6h20" stroke="#df3127" stroke-width="2.2" fill="none"/><path d="M6.8 4.6a4.2 3.8 0 0 1 8.4 0z" fill="#df3127"/><path d="M4 5v14a2 2 0 0 0 2 2h10a2 2 0 0 0 2-2V5" stroke="#df3127" stroke-width="2.4" fill="none"/></svg>
<div class="a" style="left:562px;top:790.8px;width:1002px;height:72.5px;background:#f9f9f9;border-radius:9px 0 0 9px"></div>
<div class="a" style="left:727px;top:790.8px;width:1px;height:72.5px;background:#ebebeb"></div>
<div class="a" style="left:831px;top:790.8px;width:1px;height:72.5px;background:#ebebeb"></div>
<div class="a" style="left:1021px;top:790.8px;width:1px;height:72.5px;background:#ebebeb"></div>
<div class="a" style="left:524.5px;top:811.0px;width:240px;text-align:center;font-size:21.5px;font-weight:700;color:#5f646b;line-height:32px;white-space:nowrap"><span style="display:inline-block;transform:scaleX(0.89)">Example 1</span></div>
<div class="a" style="left:659px;top:811.0px;width:240px;text-align:center;font-size:21.5px;font-weight:400;color:#5f646b;line-height:32px;white-space:nowrap"><span style="display:inline-block;transform:scaleX(0.9)">Job</span></div>
<div class="a" style="left:806px;top:811.0px;width:240px;text-align:center;font-size:21.5px;font-weight:700;color:#5f646b;line-height:32px;white-space:nowrap"><span style="display:inline-block;transform:scaleX(0.885)">Sara Williams</span></div>
<svg class="a" style="left:1065.5px;top:807.0px" width="24" height="33" viewBox="0 0 24 33"><path d="M12 0.5C5.6 0.5 0.5 5.5 0.5 11.8c0 7.5 11.5 21 11.5 21s11.5-13.5 11.5-21C23.5 5.5 18.4 0.5 12 0.5z" fill="#a9acb1"/><circle cx="12" cy="11.7" r="4.6" fill="#f9f9f9"/></svg><div class="a" style="left:1118px;top:795.0px;font-size:21px;font-weight:700;color:#5f646b;line-height:32px;white-space:nowrap;transform:scaleX(0.93);transform-origin:0 0">676 North Saint Clair<br>Street, Chicago, Illinois,...</div><svg class="a" style="left:1394px;top:818.0px" width="24" height="18" viewBox="0 0 24 18"><path d="M0.5 9C3 4 7 1 12 1s9 3 11.5 8C21 14 17 17 12 17S3 14 0.5 9z" fill="#5f646b"/><circle cx="12" cy="9" r="4.6" fill="#f9f9f9"/><circle cx="12" cy="9" r="2.6" fill="#5f646b"/></svg>
<svg class="a" style="left:1453px;top:815.5px" width="24" height="23" viewBox="0 0 24 23"><path d="M11 3.5H3a2 2 0 0 0-2 2V20a2 2 0 0 0 2 2h14.5a2 2 0 0 0 2-2v-8" stroke="#3d7ff0" stroke-width="2.2" fill="none"/><path d="M8 15l.8-4.3L19.5 0l3.5 3.5L12.3 14.2z" stroke="#3d7ff0" stroke-width="2.2" fill="none" stroke-linejoin="round"/><path d="M17.5 2l3.5 3.5 2-2-3.5-3.5z" fill="#3d7ff0"/></svg>
<svg class="a" style="left:1513px;top:815.5px" width="22" height="22" viewBox="0 0 22 22"><path d="M1 4.6h20" stroke="#df3127" stroke-width="2.2" fill="none"/><path d="M6.8 4.6a4.2 3.8 0 0 1 8.4 0z" fill="#df3127"/><path d="M4 5v14a2 2 0 0 0 2 2h10a2 2 0 0 0 2-2V5" stroke="#df3127" stroke-width="2.4" fill="none"/></svg>
<div class="a" style="left:562px;top:876.4px;width:1002px;height:72.5px;background:#f9f9f9;border-radius:9px 0 0 9px"></div>
<div class="a" style="left:727px;top:876.4px;width:1px;height:72.5px;background:#ebebeb"></div>
<div class="a" style="left:831px;top:876.4px;width:1px;height:72.5px;background:#ebebeb"></div>
<div class="a" style="left:1021px;top:876.4px;width:1px;height:72.5px;background:#ebebeb"></div>
<div class="a" style="left:524.5px;top:880.6px;width:240px;text-align:center;font-size:21.5px;font-weight:700;color:#5f646b;line-height:32px;white-space:nowrap"><span style="display:inline-block;transform:scaleX(0.89)">Test</span><br><span style="display:inline-block;transform:scaleX(0.89)">wjdjhsfhsdfb</span></div>
<div class="a" style="left:659px;top:896.6px;width:240px;text-align:center;font-size:21.5px;font-weight:400;color:#5f646b;line-height:32px;white-space:nowrap"><span style="display:inline-block;transform:scaleX(0.9)">Client</span></div>
<div class="a" style="left:806px;top:896.6px;width:240px;text-align:center;font-size:21.5px;font-weight:700;color:#5f646b;line-height:32px;white-space:nowrap"><span style="display:inline-block;transform:scaleX(0.885)">Hilda Dominguez</span></div>
<div class="a" style="left:1084px;top:896.6px;width:240px;text-align:center;font-size:21.5px;font-weight:400;color:#5f646b;line-height:32px;white-space:nowrap"><span style="display:inline-block;transform:scaleX(1)">-</span></div>
<svg class="a" style="left:1394px;top:903.6px" width="24" height="18" viewBox="0 0 24 18"><path d="M0.5 9C3 4 7 1 12 1s9 3 11.5 8C21 14 17 17 12 17S3 14 0.5 9z" fill="#5f646b"/><circle cx="12" cy="9" r="4.6" fill="#f9f9f9"/><circle cx="12" cy="9" r="2.6" fill="#5f646b"/></svg>
<svg class="a" style="left:1453px;top:901.1px" width="24" height="23" viewBox="0 0 24 23"><path d="M11 3.5H3a2 2 0 0 0-2 2V20a2 2 0 0 0 2 2h14.5a2 2 0 0 0 2-2v-8" stroke="#3d7ff0" stroke-width="2.2" fill="none"/><path d="M8 15l.8-4.3L19.5 0l3.5 3.5L12.3 14.2z" stroke="#3d7ff0" stroke-width="2.2" fill="none" stroke-linejoin="round"/><path d="M17.5 2l3.5 3.5 2-2-3.5-3.5z" fill="#3d7ff0"/></svg>
<svg class="a" style="left:1513px;top:901.1px" width="22" height="22" viewBox="0 0 22 22"><path d="M1 4.6h20" stroke="#df3127" stroke-width="2.2" fill="none"/><path d="M6.8 4.6a4.2 3.8 0 0 1 8.4 0z" fill="#df3127"/><path d="M4 5v14a2 2 0 0 0 2 2h10a2 2 0 0 0 2-2V5" stroke="#df3127" stroke-width="2.4" fill="none"/></svg>
<div class="a" style="left:562px;top:962.0px;width:1002px;height:72.5px;background:#f9f9f9;border-radius:9px 0 0 9px"></div>
<div class="a" style="left:727px;top:962.0px;width:1px;height:72.5px;background:#ebebeb"></div>
<div class="a" style="left:831px;top:962.0px;width:1px;height:72.5px;background:#ebebeb"></div>
<div class="a" style="left:1021px;top:962.0px;width:1px;height:72.5px;background:#ebebeb"></div>
<div class="a" style="left:524.5px;top:982.2px;width:240px;text-align:center;font-size:21.5px;font-weight:700;color:#5f646b;line-height:32px;white-space:nowrap"><span style="display:inline-block;transform:scaleX(0.89)">Test</span></div>
<div class="a" style="left:659px;top:982.2px;width:240px;text-align:center;font-size:21.5px;font-weight:400;color:#5f646b;line-height:32px;white-space:nowrap"><span style="display:inline-block;transform:scaleX(0.9)">General</span></div>
<div class="a" style="left:806px;top:982.2px;width:240px;text-align:center;font-size:21.5px;font-weight:400;color:#5f646b;line-height:32px;white-space:nowrap"><span style="display:inline-block;transform:scaleX(0.885)">-</span></div>
<div class="a" style="left:1084px;top:982.2px;width:240px;text-align:center;font-size:21.5px;font-weight:400;color:#5f646b;line-height:32px;white-space:nowrap"><span style="display:inline-block;transform:scaleX(1)">-</span></div>
<svg class="a" style="left:1394px;top:989.2px" width="24" height="18" viewBox="0 0 24 18"><path d="M0.5 9C3 4 7 1 12 1s9 3 11.5 8C21 14 17 17 12 17S3 14 0.5 9z" fill="#5f646b"/><circle cx="12" cy="9" r="4.6" fill="#f9f9f9"/><circle cx="12" cy="9" r="2.6" fill="#5f646b"/></svg>
<svg class="a" style="left:1453px;top:986.8px" width="24" height="23" viewBox="0 0 24 23"><path d="M11 3.5H3a2 2 0 0 0-2 2V20a2 2 0 0 0 2 2h14.5a2 2 0 0 0 2-2v-8" stroke="#3d7ff0" stroke-width="2.2" fill="none"/><path d="M8 15l.8-4.3L19.5 0l3.5 3.5L12.3 14.2z" stroke="#3d7ff0" stroke-width="2.2" fill="none" stroke-linejoin="round"/><path d="M17.5 2l3.5 3.5 2-2-3.5-3.5z" fill="#3d7ff0"/></svg>
<svg class="a" style="left:1513px;top:986.8px" width="22" height="22" viewBox="0 0 22 22"><path d="M1 4.6h20" stroke="#df3127" stroke-width="2.2" fill="none"/><path d="M6.8 4.6a4.2 3.8 0 0 1 8.4 0z" fill="#df3127"/><path d="M4 5v14a2 2 0 0 0 2 2h10a2 2 0 0 0 2-2V5" stroke="#df3127" stroke-width="2.4" fill="none"/></svg>
<div class="a" style="left:562px;top:1047.6px;width:1002px;height:72.5px;background:#f9f9f9;border-radius:9px 0 0 9px"></div>
<div class="a" style="left:727px;top:1047.6px;width:1px;height:72.5px;background:#ebebeb"></div>
<div class="a" style="left:831px;top:1047.6px;width:1px;height:72.5px;background:#ebebeb"></div>
<div class="a" style="left:1021px;top:1047.6px;width:1px;height:72.5px;background:#ebebeb"></div>
<div class="a" style="left:524.5px;top:1051.8px;width:240px;text-align:center;font-size:21.5px;font-weight:700;color:#5f646b;line-height:32px;white-space:nowrap"><span style="display:inline-block;transform:scaleX(0.89)">Shopping for</span><br><span style="display:inline-block;transform:scaleX(0.89)">Exterior Paint</span></div>
<div class="a" style="left:659px;top:1067.8px;width:240px;text-align:center;font-size:21.5px;font-weight:400;color:#5f646b;line-height:32px;white-space:nowrap"><span style="display:inline-block;transform:scaleX(0.9)">General</span></div>
<div class="a" style="left:806px;top:1067.8px;width:240px;text-align:center;font-size:21.5px;font-weight:400;color:#5f646b;line-height:32px;white-space:nowrap"><span style="display:inline-block;transform:scaleX(0.885)">-</span></div>
<div class="a" style="left:1084px;top:1067.8px;width:240px;text-align:center;font-size:21.5px;font-weight:400;color:#5f646b;line-height:32px;white-space:nowrap"><span style="display:inline-block;transform:scaleX(1)">-</span></div>
<svg class="a" style="left:1394px;top:1074.8px" width="24" height="18" viewBox="0 0 24 18"><path d="M0.5 9C3 4 7 1 12 1s9 3 11.5 8C21 14 17 17 12 17S3 14 0.5 9z" fill="#5f646b"/><circle cx="12" cy="9" r="4.6" fill="#f9f9f9"/><circle cx="12" cy="9" r="2.6" fill="#5f646b"/></svg>
<svg class="a" style="left:1453px;top:1072.3px" width="24" height="23" viewBox="0 0 24 23"><path d="M11 3.5H3a2 2 0 0 0-2 2V20a2 2 0 0 0 2 2h14.5a2 2 0 0 0 2-2v-8" stroke="#3d7ff0" stroke-width="2.2" fill="none"/><path d="M8 15l.8-4.3L19.5 0l3.5 3.5L12.3 14.2z" stroke="#3d7ff0" stroke-width="2.2" fill="none" stroke-linejoin="round"/><path d="M17.5 2l3.5 3.5 2-2-3.5-3.5z" fill="#3d7ff0"/></svg>
<svg class="a" style="left:1513px;top:1072.3px" width="22" height="22" viewBox="0 0 22 22"><path d="M1 4.6h20" stroke="#df3127" stroke-width="2.2" fill="none"/><path d="M6.8 4.6a4.2 3.8 0 0 1 8.4 0z" fill="#df3127"/><path d="M4 5v14a2 2 0 0 0 2 2h10a2 2 0 0 0 2-2V5" stroke="#df3127" stroke-width="2.4" fill="none"/></svg>
<div class="a" style="left:562px;top:1133.2px;width:1002px;height:72.5px;background:#f9f9f9;border-radius:9px 0 0 9px"></div>
<div class="a" style="left:727px;top:1133.2px;width:1px;height:72.5px;background:#ebebeb"></div>
<div class="a" style="left:831px;top:1133.2px;width:1px;height:72.5px;background:#ebebeb"></div>
<div class="a" style="left:1021px;top:1133.2px;width:1px;height:72.5px;background:#ebebeb"></div>
<div class="a" style="left:524.5px;top:1153.4px;width:240px;text-align:center;font-size:21.5px;font-weight:700;color:#5f646b;line-height:32px;white-space:nowrap"><span style="display:inline-block;transform:scaleX(0.89)">Shopping list</span></div>
<div class="a" style="left:659px;top:1153.4px;width:240px;text-align:center;font-size:21.5px;font-weight:400;color:#5f646b;line-height:32px;white-space:nowrap"><span style="display:inline-block;transform:scaleX(0.9)">Job</span></div>
<div class="a" style="left:806px;top:1153.4px;width:240px;text-align:center;font-size:21.5px;font-weight:700;color:#5f646b;line-height:32px;white-space:nowrap"><span style="display:inline-block;transform:scaleX(0.885)">Dillon Brooks</span></div>
<div class="a" style="left:1084px;top:1153.4px;width:240px;text-align:center;font-size:21.5px;font-weight:400;color:#5f646b;line-height:32px;white-space:nowrap"><span style="display:inline-block;transform:scaleX(1)">-</span></div>
<svg class="a" style="left:1394px;top:1160.4px" width="24" height="18" viewBox="0 0 24 18"><path d="M0.5 9C3 4 7 1 12 1s9 3 11.5 8C21 14 17 17 12 17S3 14 0.5 9z" fill="#5f646b"/><circle cx="12" cy="9" r="4.6" fill="#f9f9f9"/><circle cx="12" cy="9" r="2.6" fill="#5f646b"/></svg>
<svg class="a" style="left:1453px;top:1157.9px" width="24" height="23" viewBox="0 0 24 23"><path d="M11 3.5H3a2 2 0 0 0-2 2V20a2 2 0 0 0 2 2h14.5a2 2 0 0 0 2-2v-8" stroke="#3d7ff0" stroke-width="2.2" fill="none"/><path d="M8 15l.8-4.3L19.5 0l3.5 3.5L12.3 14.2z" stroke="#3d7ff0" stroke-width="2.2" fill="none" stroke-linejoin="round"/><path d="M17.5 2l3.5 3.5 2-2-3.5-3.5z" fill="#3d7ff0"/></svg>
<svg class="a" style="left:1513px;top:1157.9px" width="22" height="22" viewBox="0 0 22 22"><path d="M1 4.6h20" stroke="#df3127" stroke-width="2.2" fill="none"/><path d="M6.8 4.6a4.2 3.8 0 0 1 8.4 0z" fill="#df3127"/><path d="M4 5v14a2 2 0 0 0 2 2h10a2 2 0 0 0 2-2V5" stroke="#df3127" stroke-width="2.4" fill="none"/></svg>
<div class="a" style="left:562px;top:1218.8px;width:1002px;height:72.5px;background:#f9f9f9;border-radius:9px 0 0 9px"></div>
<div class="a" style="left:727px;top:1218.8px;width:1px;height:72.5px;background:#ebebeb"></div>
<div class="a" style="left:831px;top:1218.8px;width:1px;height:72.5px;background:#ebebeb"></div>
<div class="a" style="left:1021px;top:1218.8px;width:1px;height:72.5px;background:#ebebeb"></div>
<div class="a" style="left:524.5px;top:1239.0px;width:240px;text-align:center;font-size:21.5px;font-weight:700;color:#5f646b;line-height:32px;white-space:nowrap"><span style="display:inline-block;transform:scaleX(0.89)">Test</span></div>
<div class="a" style="left:659px;top:1239.0px;width:240px;text-align:center;font-size:21.5px;font-weight:400;color:#5f646b;line-height:32px;white-space:nowrap"><span style="display:inline-block;transform:scaleX(0.9)">General</span></div>
<div class="a" style="left:806px;top:1239.0px;width:240px;text-align:center;font-size:21.5px;font-weight:400;color:#5f646b;line-height:32px;white-space:nowrap"><span style="display:inline-block;transform:scaleX(0.885)">-</span></div>
<div class="a" style="left:1084px;top:1239.0px;width:240px;text-align:center;font-size:21.5px;font-weight:400;color:#5f646b;line-height:32px;white-space:nowrap"><span style="display:inline-block;transform:scaleX(1)">-</span></div>
<svg class="a" style="left:1394px;top:1246.0px" width="24" height="18" viewBox="0 0 24 18"><path d="M0.5 9C3 4 7 1 12 1s9 3 11.5 8C21 14 17 17 12 17S3 14 0.5 9z" fill="#5f646b"/><circle cx="12" cy="9" r="4.6" fill="#f9f9f9"/><circle cx="12" cy="9" r="2.6" fill="#5f646b"/></svg>
<svg class="a" style="left:1453px;top:1243.5px" width="24" height="23" viewBox="0 0 24 23"><path d="M11 3.5H3a2 2 0 0 0-2 2V20a2 2 0 0 0 2 2h14.5a2 2 0 0 0 2-2v-8" stroke="#3d7ff0" stroke-width="2.2" fill="none"/><path d="M8 15l.8-4.3L19.5 0l3.5 3.5L12.3 14.2z" stroke="#3d7ff0" stroke-width="2.2" fill="none" stroke-linejoin="round"/><path d="M17.5 2l3.5 3.5 2-2-3.5-3.5z" fill="#3d7ff0"/></svg>
<svg class="a" style="left:1513px;top:1243.5px" width="22" height="22" viewBox="0 0 22 22"><path d="M1 4.6h20" stroke="#df3127" stroke-width="2.2" fill="none"/><path d="M6.8 4.6a4.2 3.8 0 0 1 8.4 0z" fill="#df3127"/><path d="M4 5v14a2 2 0 0 0 2 2h10a2 2 0 0 0 2-2V5" stroke="#df3127" stroke-width="2.4" fill="none"/></svg>
<div class="a" style="left:562px;top:1304.4px;width:1002px;height:72.5px;background:#f9f9f9;border-radius:9px 0 0 9px"></div>
<div class="a" style="left:727px;top:1304.4px;width:1px;height:72.5px;background:#ebebeb"></div>
<div class="a" style="left:831px;top:1304.4px;width:1px;height:72.5px;background:#ebebeb"></div>
<div class="a" style="left:1021px;top:1304.4px;width:1px;height:72.5px;background:#ebebeb"></div>
<div class="a" style="left:524.5px;top:1324.7px;width:240px;text-align:center;font-size:21.5px;font-weight:700;color:#5f646b;line-height:32px;white-space:nowrap"><span style="display:inline-block;transform:scaleX(0.89)">Test</span></div>
<div class="a" style="left:659px;top:1324.7px;width:240px;text-align:center;font-size:21.5px;font-weight:400;color:#5f646b;line-height:32px;white-space:nowrap"><span style="display:inline-block;transform:scaleX(0.9)">Client</span></div>
<div class="a" style="left:806px;top:1324.7px;width:240px;text-align:center;font-size:21.5px;font-weight:700;color:#5f646b;line-height:32px;white-space:nowrap"><span style="display:inline-block;transform:scaleX(0.885)">John Smith</span></div>
<div class="a" style="left:1084px;top:1324.7px;width:240px;text-align:center;font-size:21.5px;font-weight:400;color:#5f646b;line-height:32px;white-space:nowrap"><span style="display:inline-block;transform:scaleX(1)">-</span></div>
<svg class="a" style="left:1394px;top:1331.7px" width="24" height="18" viewBox="0 0 24 18"><path d="M0.5 9C3 4 7 1 12 1s9 3 11.5 8C21 14 17 17 12 17S3 14 0.5 9z" fill="#5f646b"/><circle cx="12" cy="9" r="4.6" fill="#f9f9f9"/><circle cx="12" cy="9" r="2.6" fill="#5f646b"/></svg>
<svg class="a" style="left:1453px;top:1329.2px" width="24" height="23" viewBox="0 0 24 23"><path d="M11 3.5H3a2 2 0 0 0-2 2V20a2 2 0 0 0 2 2h14.5a2 2 0 0 0 2-2v-8" stroke="#3d7ff0" stroke-width="2.2" fill="none"/><path d="M8 15l.8-4.3L19.5 0l3.5 3.5L12.3 14.2z" stroke="#3d7ff0" stroke-width="2.2" fill="none" stroke-linejoin="round"/><path d="M17.5 2l3.5 3.5 2-2-3.5-3.5z" fill="#3d7ff0"/></svg>
<svg class="a" style="left:1513px;top:1329.2px" width="22" height="22" viewBox="0 0 22 22"><path d="M1 4.6h20" stroke="#df3127" stroke-width="2.2" fill="none"/><path d="M6.8 4.6a4.2 3.8 0 0 1 8.4 0z" fill="#df3127"/><path d="M4 5v14a2 2 0 0 0 2 2h10a2 2 0 0 0 2-2V5" stroke="#df3127" stroke-width="2.4" fill="none"/></svg>
<div class="a" style="left:562px;top:1390.0px;width:1002px;height:72.5px;background:#f9f9f9;border-radius:9px 0 0 9px"></div>
<div class="a" style="left:727px;top:1390.0px;width:1px;height:72.5px;background:#ebebeb"></div>
<div class="a" style="left:831px;top:1390.0px;width:1px;height:72.5px;background:#ebebeb"></div>
<div class="a" style="left:1021px;top:1390.0px;width:1px;height:72.5px;background:#ebebeb"></div>
<div class="a" style="left:524.5px;top:1410.2px;width:240px;text-align:center;font-size:21.5px;font-weight:700;color:#5f646b;line-height:32px;white-space:nowrap"><span style="display:inline-block;transform:scaleX(0.89)">Test</span></div>
<div class="a" style="left:659px;top:1410.2px;width:240px;text-align:center;font-size:21.5px;font-weight:400;color:#5f646b;line-height:32px;white-space:nowrap"><span style="display:inline-block;transform:scaleX(0.9)">General</span></div>
<div class="a" style="left:806px;top:1410.2px;width:240px;text-align:center;font-size:21.5px;font-weight:400;color:#5f646b;line-height:32px;white-space:nowrap"><span style="display:inline-block;transform:scaleX(0.885)">-</span></div>
<div class="a" style="left:1084px;top:1410.2px;width:240px;text-align:center;font-size:21.5px;font-weight:400;color:#5f646b;line-height:32px;white-space:nowrap"><span style="display:inline-block;transform:scaleX(1)">-</span></div>
<svg class="a" style="left:1394px;top:1417.2px" width="24" height="18" viewBox="0 0 24 18"><path d="M0.5 9C3 4 7 1 12 1s9 3 11.5 8C21 14 17 17 12 17S3 14 0.5 9z" fill="#5f646b"/><circle cx="12" cy="9" r="4.6" fill="#f9f9f9"/><circle cx="12" cy="9" r="2.6" fill="#5f646b"/></svg>
<svg class="a" style="left:1453px;top:1414.8px" width="24" height="23" viewBox="0 0 24 23"><path d="M11 3.5H3a2 2 0 0 0-2 2V20a2 2 0 0 0 2 2h14.5a2 2 0 0 0 2-2v-8" stroke="#3d7ff0" stroke-width="2.2" fill="none"/><path d="M8 15l.8-4.3L19.5 0l3.5 3.5L12.3 14.2z" stroke="#3d7ff0" stroke-width="2.2" fill="none" stroke-linejoin="round"/><path d="M17.5 2l3.5 3.5 2-2-3.5-3.5z" fill="#3d7ff0"/></svg>
<svg class="a" style="left:1513px;top:1414.8px" width="22" height="22" viewBox="0 0 22 22"><path d="M1 4.6h20" stroke="#df3127" stroke-width="2.2" fill="none"/><path d="M6.8 4.6a4.2 3.8 0 0 1 8.4 0z" fill="#df3127"/><path d="M4 5v14a2 2 0 0 0 2 2h10a2 2 0 0 0 2-2V5" stroke="#df3127" stroke-width="2.4" fill="none"/></svg>
<div class="a" style="left:394px;top:1370px;width:1196px;height:24px;background:linear-gradient(to bottom,rgba(0,0,0,0),rgba(0,0,0,0.035))"></div>
<div class="a" style="left:1607.5px;top:347.5px;width:1045.5px;height:1100px;background:#fff;border:1.2px solid #dcdcdc;border-radius:20px"></div>
<div class="a" style="left:1630px;top:384.5px;font-size:21.5px;font-weight:700;color:#5f646b;line-height:1;white-space:nowrap;transform:scaleX(0.877);transform-origin:0 0;">Kitchen Remodel</div>
<div class="a" style="left:1795px;top:379px;width:77.5px;height:29px;background:#fcefdc;border:1.2px solid #e49a3b;border-radius:15px"></div>
<div class="a" style="left:1806.5px;top:386.5px;font-size:16px;font-weight:700;color:#d98b30;line-height:1;white-space:nowrap;transform:scaleX(0.87);transform-origin:0 0;">Pending</div>
<div class="a" style="left:2221px;top:358.3px;width:348.4px;height:75px;border:1px solid #ebebeb;border-radius:13px;background:#fff"></div>
<div class="a" style="left:2232.2px;top:370px;width:49.8px;height:52.7px;background:#f9f9f9;border-radius:10px"></div>
<div class="a" style="left:2286.8px;top:370px;width:81.9px;height:52.7px;background:#f9f9f9;border-radius:10px"></div>
<div class="a" style="left:2374px;top:370px;width:184.8px;height:52.7px;background:#4775db;border-radius:9px"></div>
<div class="a" style="left:2581px;top:370.8px;width:50px;height:50.2px;background:#f9f9f9;border-radius:10px"></div>
<svg class="a" style="left:2245px;top:383px" width="23" height="22" viewBox="0 0 23 22"><path d="M1.5 20.5l1-5 12-12 4 4-12 12z" fill="#3f4349"/><path d="M16 2l2-1.5 4 4-1.5 2z" fill="#3f4349"/></svg>
<svg class="a" style="left:2299px;top:383px" width="26" height="24" viewBox="0 0 26 24"><rect x="1.5" y="7" width="22" height="15.5" rx="1" stroke="#3f4349" stroke-width="2" fill="none"/><path d="M1.8 7.5l10.7 8 10.7-8" stroke="#3f4349" stroke-width="2" fill="none"/><path d="M9 5l3.5-4 3.5 4z" fill="#3f4349"/></svg>
<svg class="a" style="left:2336px;top:390px" width="16" height="11" viewBox="0 0 16 11"><path d="M2 2l6 6 6-6" stroke="#3f4349" stroke-width="2.4" fill="none"/></svg>
<div class="a" style="left:2392.5px;top:386.5px;font-size:21.5px;font-weight:400;color:#fff;line-height:1;white-space:nowrap;transform:scaleX(0.937);transform-origin:0 0;">More Actions</div>
<svg class="a" style="left:2520px;top:390px" width="16" height="11" viewBox="0 0 16 11"><path d="M2 2l6 6 6-6" stroke="#fff" stroke-width="2" fill="none"/></svg>
<svg class="a" style="left:2595px;top:385px" width="22" height="21" viewBox="0 0 22 21"><path d="M20 1.5l-7 7M13 3v5.5h5.5M2 19.5l7-7M9 18v-5.5H3.5" stroke="#3f4349" stroke-width="2.3" fill="none"/></svg>
<div class="a" style="left:1651px;top:471px;font-size:21.5px;font-weight:400;color:#df3427;line-height:1;white-space:nowrap;transform:scaleX(0.95);transform-origin:0 0;">Shopping List</div>
<div class="a" style="left:1830px;top:471px;font-size:21.5px;font-weight:400;color:#5f646b;line-height:1;white-space:nowrap;transform:scaleX(0.864);transform-origin:0 0;">Tasks</div>
<div class="a" style="left:1931px;top:471px;font-size:21.5px;font-weight:400;color:#5f646b;line-height:1;white-space:nowrap;transform:scaleX(0.907);transform-origin:0 0;">Notes</div>
<div class="a" style="left:1629px;top:507px;width:1002px;height:1px;background:#e5e5e5"></div>
<div class="a" style="left:1629px;top:503px;width:168px;height:3.6px;background:#df3427"></div>
<div class="a" style="left:1629px;top:540px;width:485px;height:95.5px;border:1.2px solid #d8d8d8;border-radius:10px;background:#fff"></div>
<div class="a" style="left:1641.6px;top:556px;font-size:20px;font-weight:400;color:#a3a7ac;line-height:1;white-space:nowrap;transform:scaleX(0.86);transform-origin:0 0;">For General</div>
<div class="a" style="left:2430px;top:540px;width:201px;text-align:right;font-size:21px;color:#6b6f75;line-height:32px;white-space:nowrap">Title<br>Remodel</div>
<div class="a" style="left:2138px;top:582px;width:180px;height:4.4px;background:#e43b25"></div>
<svg class="a" style="left:2315px;top:571px" width="27" height="27" viewBox="0 0 27 27"><path d="M0.5 0.5L26 13.5 0.5 26z" fill="#e43b25"/></svg>
<div class="a" style="left:1629px;top:681px;width:1002px;height:53.7px;background:#686c74;border-radius:10px"></div>
<div class="a" style="left:1880px;top:681px;width:1px;height:53.7px;background:#7f838a"></div>
<div class="a" style="left:1880px;top:748px;width:1px;height:53.3px;background:#ececec"></div>
<div class="a" style="left:2110px;top:681px;width:1px;height:53.7px;background:#7f838a"></div>
<div class="a" style="left:2110px;top:748px;width:1px;height:53.3px;background:#ececec"></div>
<div class="a" style="left:2328px;top:681px;width:1px;height:53.7px;background:#7f838a"></div>
<div class="a" style="left:2328px;top:748px;width:1px;height:53.3px;background:#ececec"></div>
<div class="a" style="left:1629px;top:801px;width:1002px;height:1.2px;background:#e8e8e8"></div>
<div class="a" style="left:1604.5px;top:698px;width:300px;text-align:center;font-size:22.5px;font-weight:400;color:#fff;line-height:1;white-space:nowrap;"><span style="display:inline-block;transform:scaleX(0.9)">Client Name</span></div>
<div class="a" style="left:1845px;top:698px;width:300px;text-align:center;font-size:22.5px;font-weight:400;color:#fff;line-height:1;white-space:nowrap;"><span style="display:inline-block;transform:scaleX(0.9)">Total Items</span></div>
<div class="a" style="left:2069px;top:698px;width:300px;text-align:center;font-size:22.5px;font-weight:400;color:#fff;line-height:1;white-space:nowrap;"><span style="display:inline-block;transform:scaleX(0.9)">Total Price</span></div>
<div class="a" style="left:2329.5px;top:698px;width:300px;text-align:center;font-size:22.5px;font-weight:400;color:#fff;line-height:1;white-space:nowrap;"><span style="display:inline-block;transform:scaleX(0.9)">Added On</span></div>
<div class="a" style="left:1604.5px;top:764px;width:300px;text-align:center;font-size:20.5px;font-weight:400;color:#5f646b;line-height:1;white-space:nowrap;"><span style="display:inline-block;transform:scaleX(0.95)">-</span></div>
<div class="a" style="left:1845px;top:764px;width:300px;text-align:center;font-size:20.5px;font-weight:400;color:#5f646b;line-height:1;white-space:nowrap;"><span style="display:inline-block;transform:scaleX(0.95)">18.00</span></div>
<div class="a" style="left:2069px;top:764px;width:300px;text-align:center;font-size:20.5px;font-weight:400;color:#5f646b;line-height:1;white-space:nowrap;"><span style="display:inline-block;transform:scaleX(0.95)">$1,232.07</span></div>
<div class="a" style="left:2329.5px;top:764px;width:300px;text-align:center;font-size:20.5px;font-weight:400;color:#5f646b;line-height:1;white-space:nowrap;"><span style="display:inline-block;transform:scaleX(0.95)">Nov. 29th, 2025</span></div>
<div class="a" style="left:1629px;top:849.6px;width:1002px;height:53px;background:#686c74;border-radius:10px"></div>
<div class="a" style="left:1675px;top:849.6px;width:1px;height:53px;background:#7f838a"></div>
<div class="a" style="left:1764px;top:849.6px;width:1px;height:53px;background:#7f838a"></div>
<div class="a" style="left:2244px;top:849.6px;width:1px;height:53px;background:#7f838a"></div>
<div class="a" style="left:2329.5px;top:849.6px;width:1px;height:53px;background:#7f838a"></div>
<div class="a" style="left:2426.5px;top:849.6px;width:1px;height:53px;background:#7f838a"></div>
<div class="a" style="left:2505px;top:849.6px;width:1px;height:53px;background:#7f838a"></div>
<div class="a" style="left:1502.0px;top:865px;width:300px;text-align:center;font-size:21.5px;font-weight:400;color:#fff;line-height:1;white-space:nowrap;"><span style="display:inline-block;transform:scaleX(0.93)">#</span></div>
<div class="a" style="left:1569.5px;top:865px;width:300px;text-align:center;font-size:21.5px;font-weight:400;color:#fff;line-height:1;white-space:nowrap;"><span style="display:inline-block;transform:scaleX(0.93)">Image</span></div>
<div class="a" style="left:1854.0px;top:865px;width:300px;text-align:center;font-size:21.5px;font-weight:400;color:#fff;line-height:1;white-space:nowrap;"><span style="display:inline-block;transform:scaleX(0.93)">Name</span></div>
<div class="a" style="left:2136.75px;top:865px;width:300px;text-align:center;font-size:21.5px;font-weight:400;color:#fff;line-height:1;white-space:nowrap;"><span style="display:inline-block;transform:scaleX(0.93)">Vendor</span></div>
<div class="a" style="left:2228.0px;top:865px;width:300px;text-align:center;font-size:21.5px;font-weight:400;color:#fff;line-height:1;white-space:nowrap;"><span style="display:inline-block;transform:scaleX(0.93)">Rate</span></div>
<div class="a" style="left:2315.75px;top:865px;width:300px;text-align:center;font-size:21.5px;font-weight:400;color:#fff;line-height:1;white-space:nowrap;"><span style="display:inline-block;transform:scaleX(0.93)">Qty</span></div>
<div class="a" style="left:2418.0px;top:865px;width:300px;text-align:center;font-size:21.5px;font-weight:400;color:#fff;line-height:1;white-space:nowrap;"><span style="display:inline-block;transform:scaleX(0.93)">Client Total</span></div>
<div class="a" style="left:1629px;top:1004.3px;width:1002px;height:1.2px;background:#e8e8e8"></div>
<div class="a" style="left:1675px;top:916.5px;width:1px;height:87.8px;background:#ececec"></div>
<div class="a" style="left:1764px;top:916.5px;width:1px;height:87.8px;background:#ececec"></div>
<div class="a" style="left:2244px;top:916.5px;width:1px;height:87.8px;background:#ececec"></div>
<div class="a" style="left:2329.5px;top:916.5px;width:1px;height:87.8px;background:#ececec"></div>
<div class="a" style="left:2426.5px;top:916.5px;width:1px;height:87.8px;background:#ececec"></div>
<div class="a" style="left:2505px;top:916.5px;width:1px;height:87.8px;background:#ececec"></div>
<div class="a" style="left:1502px;top:949.4px;width:300px;text-align:center;font-size:21.5px;font-weight:700;color:#5f646b;line-height:1;white-space:nowrap;"><span style="display:inline-block;transform:scaleX(1)">1</span></div>
<div class="a" style="left:1687.3px;top:927.4px;width:65.1px;height:66.3px;border:1px solid #e6e6e6;background:#fff"></div>
<svg class="a" style="left:1693px;top:928.4px" width="54" height="65" viewBox="0 0 54 65"><path d="M2 15h4v10H2zM48 15h4v10h-4z" fill="#222"/><path d="M5 6c0-3 9-5 22-5s22 2 22 5v52c0 4-9 6-22 6S5 62 5 58z" fill="#b3282c"/><path d="M16 6v56M38 6v56" stroke="#8e1d21" stroke-width="6" opacity=".5"/><ellipse cx="27" cy="5" rx="21.5" ry="4" fill="#ccc"/><ellipse cx="27" cy="5.5" rx="17" ry="2.5" fill="#777"/><ellipse cx="27" cy="22" rx="10" ry="5" fill="#fff"/><ellipse cx="27" cy="22" rx="8" ry="3.6" fill="#111"/><path d="M10 33h34" stroke="#f4d4d4" stroke-width="2.2"/><rect x="17" y="44" width="20" height="4" fill="none" stroke="#e88" stroke-width="1"/><path d="M23 52h8M23 55h8" stroke="#fff" stroke-width="1"/></svg>
<div class="a" style="left:1776px;top:941.4px;font-size:20.5px;color:#5f646b;line-height:27px;white-space:nowrap">glidden premium 1 Interior Paint</div>
<svg class="a" style="left:2270px;top:942.9px" width="34" height="35" viewBox="0 0 34 35"><rect x="0" y="0" width="34" height="35" rx="7" fill="#a9acb1"/><path d="M5 12l3-6h18l3 6z" fill="#fff"/><path d="M4.5 11.5h25v2.5h-25z" fill="#fff"/><rect x="6" y="16" width="22" height="14" fill="#fff"/><rect x="8" y="18" width="4.5" height="11" fill="#a9acb1"/><rect x="14" y="18" width="12" height="9" fill="#a9acb1"/><path d="M16 25.5l6-5M21 19.5a2 2 0 1 0 3 1" stroke="#fff" stroke-width="1.4" fill="none"/><rect x="5" y="29.5" width="24" height="1.5" fill="#fff"/></svg>
<div class="a" style="left:2228px;top:949.4px;width:300px;text-align:center;font-size:21px;font-weight:400;color:#5f646b;line-height:1;white-space:nowrap;"><span style="display:inline-block;transform:scaleX(0.93)">$26.01</span></div>
<div class="a" style="left:2316px;top:928.4px;width:300px;text-align:center;font-size:20.5px;font-weight:400;color:#5f646b;line-height:32px;white-space:nowrap;"><span style="display:inline-block;transform:scaleX(0.92)">1.00<br>Unit</span></div>
<div class="a" style="left:2418px;top:949.4px;width:300px;text-align:center;font-size:21px;font-weight:700;color:#5f646b;line-height:1;white-space:nowrap;"><span style="display:inline-block;transform:scaleX(0.977)">$26.01</span></div>
<div class="a" style="left:1629px;top:1106.5px;width:1002px;height:1.2px;background:#e8e8e8"></div>
<div class="a" style="left:1675px;top:1018.2px;width:1px;height:88.3px;background:#ececec"></div>
<div class="a" style="left:1764px;top:1018.2px;width:1px;height:88.3px;background:#ececec"></div>
<div class="a" style="left:2244px;top:1018.2px;width:1px;height:88.3px;background:#ececec"></div>
<div class="a" style="left:2329.5px;top:1018.2px;width:1px;height:88.3px;background:#ececec"></div>
<div class="a" style="left:2426.5px;top:1018.2px;width:1px;height:88.3px;background:#ececec"></div>
<div class="a" style="left:2505px;top:1018.2px;width:1px;height:88.3px;background:#ececec"></div>
<div class="a" style="left:1502px;top:1051.35px;width:300px;text-align:center;font-size:21.5px;font-weight:700;color:#5f646b;line-height:1;white-space:nowrap;"><span style="display:inline-block;transform:scaleX(1)">2</span></div>
<div class="a" style="left:1687.3px;top:1029.3px;width:65.1px;height:66.3px;border:1px solid #e6e6e6;background:#fff"></div>
<svg class="a" style="left:1690px;top:1042.8px" width="60" height="40" viewBox="0 0 60 40"><g fill="#696d75"><path d="M31.200000000000003 4.9L35.2 2.4000000000000004L41.7 6.1000000000000005L37.7 8.600000000000001Z"/><path d="M31.200000000000003 6.4L37.2 10.0V12.4L31.200000000000003 8.8Z"/><path d="M38.5 9.9L41.7 7.7V10.0L38.5 12.3Z"/><path d="M47.1 14.3L51.1 11.8L57.6 15.5L53.6 18.0Z"/><path d="M47.1 15.8L53.1 19.4V21.8L47.1 18.2Z"/><path d="M54.4 19.3L57.6 17.1V19.4L54.4 21.700000000000003Z"/><path d="M16.7 14.3L20.7 11.8L27.2 15.5L23.2 18.0Z"/><path d="M16.7 15.8L22.7 19.4V21.8L16.7 18.2Z"/><path d="M24.0 19.3L27.2 17.1V19.4L24.0 21.700000000000003Z"/><path d="M32.7 23.7L36.7 21.2L43.2 24.9L39.2 27.4Z"/><path d="M32.7 25.2L38.7 28.799999999999997V31.2L32.7 27.599999999999998Z"/><path d="M40.0 28.7L43.2 26.5V28.799999999999997L40.0 31.1Z"/><path d="M0.2999999999999998 24.1L4.3 21.6L10.8 25.3L6.8 27.8Z"/><path d="M0.2999999999999998 25.6L6.3 29.200000000000003V31.6L0.2999999999999998 28.0Z"/><path d="M7.6 29.1L10.8 26.900000000000002V29.200000000000003L7.6 31.5Z"/><path d="M16.7 33.8L20.7 31.299999999999997L27.2 35.0L23.2 37.5Z"/><path d="M16.7 35.3L22.7 38.9V41.3L16.7 37.699999999999996Z"/><path d="M24.0 38.8L27.2 36.599999999999994V38.9L24.0 41.199999999999996Z"/></g><g fill="#696d75" stroke="#fff" stroke-width="0.8"><path d="M17 4.7L22.7 0.8L57.7 20.5L51.5 24.2Z"/><path d="M17 6.2L51.5 25.7V29L17 9.5Z"/><path d="M52.5 25.5L57.7 22V25L52.5 28.5Z"/><path d="M1 13.2L6.6 9.7L41.7 29.7L35.8 33.3Z"/><path d="M1 14.7L35.8 34.8V38.3L1 18Z"/><path d="M36.8 34.7L41.7 31.2V34.2L36.8 37.7Z"/></g></svg>
<div class="a" style="left:1776px;top:1043.3px;font-size:20.5px;color:#5f646b;line-height:27px;white-space:nowrap">5/8" 4x12' Drywall</div>
<svg class="a" style="left:2270px;top:1044.8px" width="34" height="35" viewBox="0 0 34 35"><rect x="0" y="0" width="34" height="35" rx="7" fill="#a9acb1"/><path d="M5 12l3-6h18l3 6z" fill="#fff"/><path d="M4.5 11.5h25v2.5h-25z" fill="#fff"/><rect x="6" y="16" width="22" height="14" fill="#fff"/><rect x="8" y="18" width="4.5" height="11" fill="#a9acb1"/><rect x="14" y="18" width="12" height="9" fill="#a9acb1"/><path d="M16 25.5l6-5M21 19.5a2 2 0 1 0 3 1" stroke="#fff" stroke-width="1.4" fill="none"/><rect x="5" y="29.5" width="24" height="1.5" fill="#fff"/></svg>
<div class="a" style="left:2228px;top:1051.35px;width:300px;text-align:center;font-size:21px;font-weight:400;color:#5f646b;line-height:1;white-space:nowrap;"><span style="display:inline-block;transform:scaleX(0.93)">$27.05</span></div>
<div class="a" style="left:2316px;top:1030.35px;width:300px;text-align:center;font-size:20.5px;font-weight:400;color:#5f646b;line-height:32px;white-space:nowrap;"><span style="display:inline-block;transform:scaleX(0.92)">1.00<br>Unit</span></div>
<div class="a" style="left:2418px;top:1051.35px;width:300px;text-align:center;font-size:21px;font-weight:700;color:#5f646b;line-height:1;white-space:nowrap;"><span style="display:inline-block;transform:scaleX(0.977)">$27.05</span></div>
<div class="a" style="left:1629px;top:1233.3px;width:1002px;height:1.2px;background:#e8e8e8"></div>
<div class="a" style="left:1675px;top:1120.5px;width:1px;height:112.8px;background:#ececec"></div>
<div class="a" style="left:1764px;top:1120.5px;width:1px;height:112.8px;background:#ececec"></div>
<div class="a" style="left:2244px;top:1120.5px;width:1px;height:112.8px;background:#ececec"></div>
<div class="a" style="left:2329.5px;top:1120.5px;width:1px;height:112.8px;background:#ececec"></div>
<div class="a" style="left:2426.5px;top:1120.5px;width:1px;height:112.8px;background:#ececec"></div>
<div class="a" style="left:2505px;top:1120.5px;width:1px;height:112.8px;background:#ececec"></div>
<div class="a" style="left:1502px;top:1165.9px;width:300px;text-align:center;font-size:21.5px;font-weight:700;color:#5f646b;line-height:1;white-space:nowrap;"><span style="display:inline-block;transform:scaleX(1)">3</span></div>
<div class="a" style="left:1687.3px;top:1143.9px;width:65.1px;height:66.3px;border:1px solid #e6e6e6;background:#fff"></div>
<svg class="a" style="left:1690px;top:1157.4px" width="60" height="40" viewBox="0 0 60 40"><g fill="#696d75"><path d="M31.200000000000003 4.9L35.2 2.4000000000000004L41.7 6.1000000000000005L37.7 8.600000000000001Z"/><path d="M31.200000000000003 6.4L37.2 10.0V12.4L31.200000000000003 8.8Z"/><path d="M38.5 9.9L41.7 7.7V10.0L38.5 12.3Z"/><path d="M47.1 14.3L51.1 11.8L57.6 15.5L53.6 18.0Z"/><path d="M47.1 15.8L53.1 19.4V21.8L47.1 18.2Z"/><path d="M54.4 19.3L57.6 17.1V19.4L54.4 21.700000000000003Z"/><path d="M16.7 14.3L20.7 11.8L27.2 15.5L23.2 18.0Z"/><path d="M16.7 15.8L22.7 19.4V21.8L16.7 18.2Z"/><path d="M24.0 19.3L27.2 17.1V19.4L24.0 21.700000000000003Z"/><path d="M32.7 23.7L36.7 21.2L43.2 24.9L39.2 27.4Z"/><path d="M32.7 25.2L38.7 28.799999999999997V31.2L32.7 27.599999999999998Z"/><path d="M40.0 28.7L43.2 26.5V28.799999999999997L40.0 31.1Z"/><path d="M0.2999999999999998 24.1L4.3 21.6L10.8 25.3L6.8 27.8Z"/><path d="M0.2999999999999998 25.6L6.3 29.200000000000003V31.6L0.2999999999999998 28.0Z"/><path d="M7.6 29.1L10.8 26.900000000000002V29.200000000000003L7.6 31.5Z"/><path d="M16.7 33.8L20.7 31.299999999999997L27.2 35.0L23.2 37.5Z"/><path d="M16.7 35.3L22.7 38.9V41.3L16.7 37.699999999999996Z"/><path d="M24.0 38.8L27.2 36.599999999999994V38.9L24.0 41.199999999999996Z"/></g><g fill="#696d75" stroke="#fff" stroke-width="0.8"><path d="M17 4.7L22.7 0.8L57.7 20.5L51.5 24.2Z"/><path d="M17 6.2L51.5 25.7V29L17 9.5Z"/><path d="M52.5 25.5L57.7 22V25L52.5 28.5Z"/><path d="M1 13.2L6.6 9.7L41.7 29.7L35.8 33.3Z"/><path d="M1 14.7L35.8 34.8V38.3L1 18Z"/><path d="M36.8 34.7L41.7 31.2V34.2L36.8 37.7Z"/></g></svg>
<div class="a" style="left:1776px;top:1129.9px;font-size:20.5px;color:#5f646b;line-height:27px;white-space:nowrap">Johns Manville R-19 Unfaced Fiberglass<br>Insulation Batt 15 in. x 93 in. (8-Bags)</div>
<div class="a" style="left:1776px;top:1194.9px;font-size:19.5px;font-weight:700;font-style:italic;color:#5f646b;line-height:27px;white-space:nowrap;transform:scaleX(0.88);transform-origin:0 0">SKU : 306769242</div>
<svg class="a" style="left:2270px;top:1159.4px" width="34" height="35" viewBox="0 0 34 35"><rect x="0" y="0" width="34" height="35" rx="7" fill="#a9acb1"/><path d="M5 12l3-6h18l3 6z" fill="#fff"/><path d="M4.5 11.5h25v2.5h-25z" fill="#fff"/><rect x="6" y="16" width="22" height="14" fill="#fff"/><rect x="8" y="18" width="4.5" height="11" fill="#a9acb1"/><rect x="14" y="18" width="12" height="9" fill="#a9acb1"/><path d="M16 25.5l6-5M21 19.5a2 2 0 1 0 3 1" stroke="#fff" stroke-width="1.4" fill="none"/><rect x="5" y="29.5" width="24" height="1.5" fill="#fff"/></svg>
<div class="a" style="left:2228px;top:1165.9px;width:300px;text-align:center;font-size:21px;font-weight:400;color:#5f646b;line-height:1;white-space:nowrap;"><span style="display:inline-block;transform:scaleX(0.93)">$519.89</span></div>
<div class="a" style="left:2316px;top:1144.9px;width:300px;text-align:center;font-size:20.5px;font-weight:400;color:#5f646b;line-height:32px;white-space:nowrap;"><span style="display:inline-block;transform:scaleX(0.92)">1.00<br>Unit</span></div>
<div class="a" style="left:2418px;top:1165.9px;width:300px;text-align:center;font-size:21px;font-weight:700;color:#5f646b;line-height:1;white-space:nowrap;"><span style="display:inline-block;transform:scaleX(0.977)">$519.89</span></div>
<div class="a" style="left:1629px;top:1335.3px;width:1002px;height:1.2px;background:#e8e8e8"></div>
<div class="a" style="left:1675px;top:1247.3px;width:1px;height:88.0px;background:#ececec"></div>
<div class="a" style="left:1764px;top:1247.3px;width:1px;height:88.0px;background:#ececec"></div>
<div class="a" style="left:2244px;top:1247.3px;width:1px;height:88.0px;background:#ececec"></div>
<div class="a" style="left:2329.5px;top:1247.3px;width:1px;height:88.0px;background:#ececec"></div>
<div class="a" style="left:2426.5px;top:1247.3px;width:1px;height:88.0px;background:#ececec"></div>
<div class="a" style="left:2505px;top:1247.3px;width:1px;height:88.0px;background:#ececec"></div>
<div class="a" style="left:1502px;top:1280.3px;width:300px;text-align:center;font-size:21.5px;font-weight:700;color:#5f646b;line-height:1;white-space:nowrap;"><span style="display:inline-block;transform:scaleX(1)">4</span></div>
<div class="a" style="left:1687.3px;top:1258.3px;width:65.1px;height:66.3px;border:1px solid #e6e6e6;background:#fff"></div>
<svg class="a" style="left:1694px;top:1268.3px" width="18" height="50" viewBox="0 0 18 50"><path d="M3 3c0-2 2-3 6-3s6 1 6 3v45H3z" fill="#f1f1f1"/><path d="M15 3v45" stroke="#ccc" stroke-width="2"/><rect x="3" y="12" width="12" height="4" fill="#e8892f"/><rect x="3" y="20" width="12" height="3" fill="#f0a35a"/><path d="M5 28h8M5 33h8M5 38h8" stroke="#666" stroke-width="1"/><rect x="3" y="45" width="12" height="3" fill="#e8892f"/></svg>
<div class="a" style="left:1776px;top:1272.3px;font-size:20.5px;color:#5f646b;line-height:27px;white-space:nowrap">HDX 10 ounce All Purpose Gloss</div>
<svg class="a" style="left:2270px;top:1273.8px" width="34" height="35" viewBox="0 0 34 35"><rect x="0" y="0" width="34" height="35" rx="7" fill="#a9acb1"/><path d="M5 12l3-6h18l3 6z" fill="#fff"/><path d="M4.5 11.5h25v2.5h-25z" fill="#fff"/><rect x="6" y="16" width="22" height="14" fill="#fff"/><rect x="8" y="18" width="4.5" height="11" fill="#a9acb1"/><rect x="14" y="18" width="12" height="9" fill="#a9acb1"/><path d="M16 25.5l6-5M21 19.5a2 2 0 1 0 3 1" stroke="#fff" stroke-width="1.4" fill="none"/><rect x="5" y="29.5" width="24" height="1.5" fill="#fff"/></svg>
<div class="a" style="left:2228px;top:1280.3px;width:300px;text-align:center;font-size:21px;font-weight:400;color:#5f646b;line-height:1;white-space:nowrap;"><span style="display:inline-block;transform:scaleX(0.93)">$2.78</span></div>
<div class="a" style="left:2316px;top:1259.3px;width:300px;text-align:center;font-size:20.5px;font-weight:400;color:#5f646b;line-height:32px;white-space:nowrap;"><span style="display:inline-block;transform:scaleX(0.92)">1.00<br>Unit</span></div>
<div class="a" style="left:2418px;top:1280.3px;width:300px;text-align:center;font-size:21px;font-weight:700;color:#5f646b;line-height:1;white-space:nowrap;"><span style="display:inline-block;transform:scaleX(0.977)">$2.78</span></div>
<div class="a" style="left:1629px;top:1434.5px;width:1002px;height:1.2px;background:#e8e8e8"></div>
<div class="a" style="left:1675px;top:1349.5px;width:1px;height:85.0px;background:#ececec"></div>
<div class="a" style="left:1764px;top:1349.5px;width:1px;height:85.0px;background:#ececec"></div>
<div class="a" style="left:2244px;top:1349.5px;width:1px;height:85.0px;background:#ececec"></div>
<div class="a" style="left:2329.5px;top:1349.5px;width:1px;height:85.0px;background:#ececec"></div>
<div class="a" style="left:2426.5px;top:1349.5px;width:1px;height:85.0px;background:#ececec"></div>
<div class="a" style="left:2505px;top:1349.5px;width:1px;height:85.0px;background:#ececec"></div>
<div class="a" style="left:1502px;top:1381.0px;width:300px;text-align:center;font-size:21.5px;font-weight:700;color:#5f646b;line-height:1;white-space:nowrap;"><span style="display:inline-block;transform:scaleX(1)">5</span></div>
<div class="a" style="left:1688px;top:1361px;width:64px;height:80px;background:#731515"></div>
<svg class="a" style="left:1690px;top:1361px" width="60" height="40" viewBox="0 0 60 40"><path d="M2 5h56v35H2z" fill="#e9e9e9"/><ellipse cx="30" cy="5" rx="28" ry="4" fill="#c9c9c9"/><ellipse cx="30" cy="5.5" rx="22" ry="2.5" fill="#8a8a8a"/><rect x="14" y="11" width="32" height="3.5" fill="#222"/><rect x="18" y="16" width="24" height="2" fill="#5577bb"/><rect x="10" y="21" width="40" height="3.5" fill="#2a4fa8"/><rect x="14" y="25.5" width="32" height="1.5" fill="#2a4fa8"/><path d="M2 28c10 2 20 8 30 12H2z" fill="#8e2020"/></svg>
<div class="a" style="left:1776px;top:1360.5px;font-size:20.5px;color:#5f646b;line-height:27px;white-space:nowrap">Rust-Oleum Painter's Touch Multipurpose Latex<br>Satin</div>
<div class="a" style="left:2268px;top:1382.0px;font-size:26px;font-weight:700;font-style:italic;color:#d8262c;letter-spacing:-3px;line-height:26px;transform:scaleX(0.9)">ACE</div>
<div class="a" style="left:2228px;top:1381.0px;width:300px;text-align:center;font-size:21px;font-weight:400;color:#5f646b;line-height:1;white-space:nowrap;"><span style="display:inline-block;transform:scaleX(0.93)">$9.59</span></div>
<div class="a" style="left:2316px;top:1360.0px;width:300px;text-align:center;font-size:20.5px;font-weight:400;color:#5f646b;line-height:32px;white-space:nowrap;"><span style="display:inline-block;transform:scaleX(0.92)">1.00<br>Unit</span></div>
<div class="a" style="left:2418px;top:1381.0px;width:300px;text-align:center;font-size:21px;font-weight:700;color:#5f646b;line-height:1;white-space:nowrap;"><span style="display:inline-block;transform:scaleX(0.977)">$9.59</span></div>
<div class="a" style="left:2345.7px;top:425.7px;width:212.7px;height:257px;background:#f5f5f5;border:1.2px solid #d9d9d9;border-radius:9px;box-shadow:0 2px 6px rgba(0,0,0,0.05)"></div>
<div class="a" style="left:2354.3px;top:556px;width:195.5px;height:53.8px;background:#ebebeb;border-radius:6px"></div>
<svg class="a" style="left:2365px;top:455px" width="26" height="21" viewBox="0 0 26 21"><path d="M6 20a5.5 5.5 0 0 1-.5-11A8 8 0 0 1 20.5 7 6.5 6.5 0 0 1 20 20z" fill="#3f4349"/><path d="M13 5.5v8.5M9 10.5l4 4 4-4" stroke="#f5f5f5" stroke-width="2.2" fill="none"/></svg>
<svg class="a" style="left:2364px;top:509px" width="28" height="28" viewBox="0 0 28 28"><circle cx="14" cy="14.2" r="5.9" fill="#3f4349"/><circle cx="14" cy="14.2" r="11.3" stroke="#3f4349" stroke-width="2" fill="none" stroke-dasharray="11.83 5.915" stroke-dashoffset="5.915" stroke-linecap="round"/></svg>
<svg class="a" style="left:2368px;top:570px" width="21" height="24" viewBox="0 0 21 24"><path d="M1 8h19v15H1z" fill="#3f4349"/><path d="M6 10V5.5a4.5 4.5 0 0 1 9 0V10" stroke="#3f4349" stroke-width="2.2" fill="none"/></svg>
<svg class="a" style="left:2367px;top:629px" width="22" height="22" viewBox="0 0 22 22"><path d="M1.5 4.6h19" stroke="#e06464" stroke-width="2" fill="none"/><path d="M7 4.6a4 3.6 0 0 1 8 0z" fill="#e06464"/><path d="M4.5 5v14a2 2 0 0 0 2 2h9a2 2 0 0 0 2-2V5" stroke="#e06464" stroke-width="2.4" fill="none"/></svg>
<div class="a" style="left:2403px;top:456px;font-size:22px;font-weight:400;color:#3f4349;line-height:1;white-space:nowrap;transform:scaleX(0.9);transform-origin:0 0;">Download PDF</div>
<div class="a" style="left:2403px;top:514.5px;font-size:22px;font-weight:400;color:#3f4349;line-height:1;white-space:nowrap;transform:scaleX(0.905);transform-origin:0 0;">Update Status</div>
<div class="a" style="left:2403px;top:573.5px;font-size:22px;font-weight:400;color:#3f4349;line-height:1;white-space:nowrap;transform:scaleX(0.925);transform-origin:0 0;">Start Shopping</div>
<div class="a" style="left:2403px;top:632.5px;font-size:22px;font-weight:400;color:#3f4349;line-height:1;white-space:nowrap;transform:scaleX(0.91);transform-origin:0 0;">Delete</div>
<div class="a" style="left:2716.7px;top:1249px;width:64px;height:64px;border-radius:32px;background:#d93835;box-shadow:0 3px 22px rgba(0,0,0,0.22)"></div>
<svg class="a" style="left:2730px;top:1260px" width="40" height="40" viewBox="2730 1260 40 40"><path d="M2738 1265h22a3 3 0 0 1 3 3v29l-7.5-3.5H2738a3 3 0 0 1-3-3V1268a3 3 0 0 1 3-3z" fill="#fff"/><path d="M2739.5 1284.6c5 3.6 15 3.6 20 0" stroke="#d93835" stroke-width="1.6" fill="none"/></svg>
</body></html>
